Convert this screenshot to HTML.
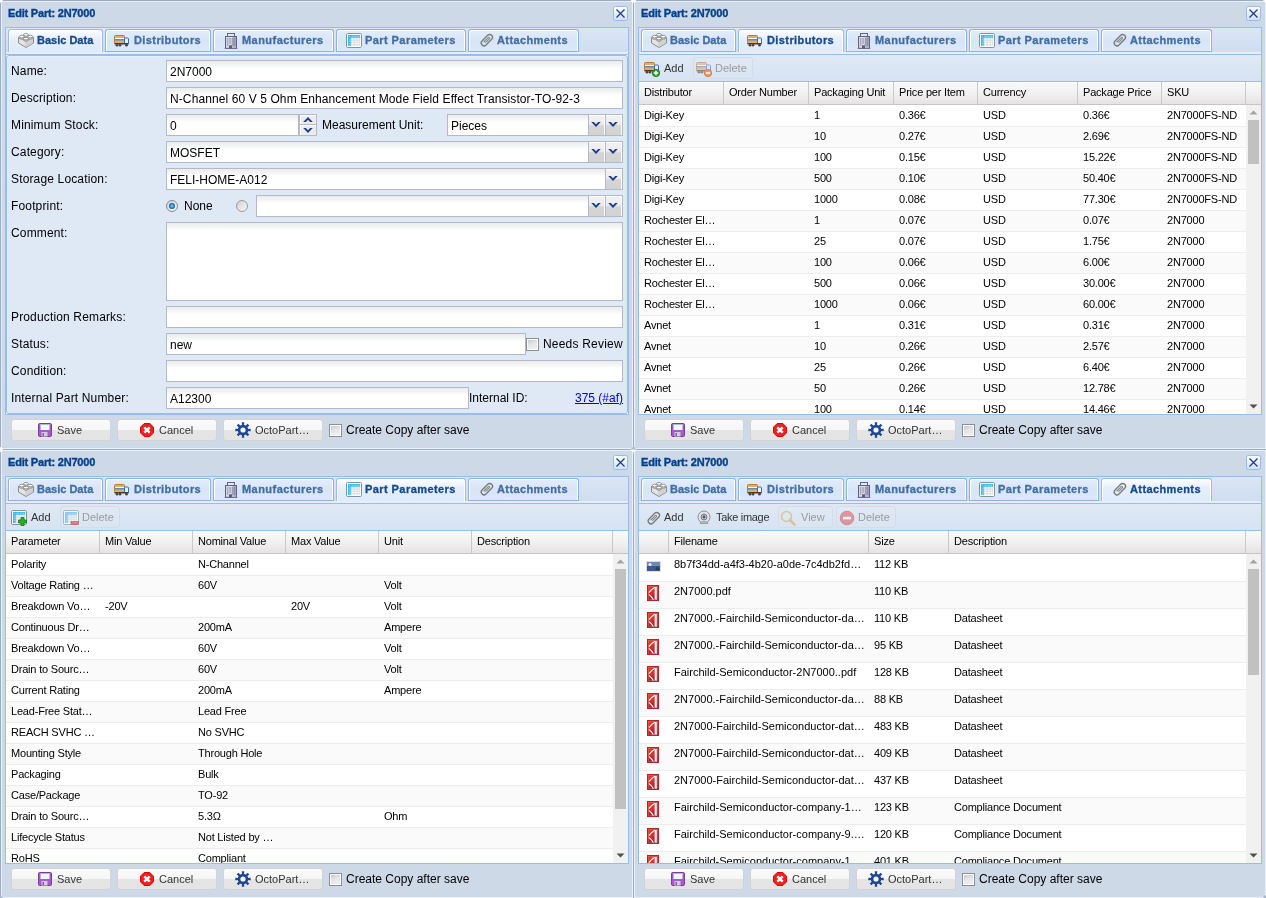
<!DOCTYPE html><html><head><meta charset="utf-8"><style>
*{box-sizing:border-box}
body{margin:0;width:1266px;height:898px;overflow:hidden;position:relative;font-family:"Liberation Sans",sans-serif;background:#fff}
.a{position:absolute}
.t{position:absolute;white-space:nowrap;line-height:20px;height:20px;will-change:transform}
.win{position:absolute;width:633px;height:449px;background:#ced9e7;overflow:hidden}
.fld{position:absolute;background:linear-gradient(#ebeded,#f1f2f2 3px,#fafbfb 6px,#fff 8px);border:1px solid #b5b8c8}
.trg{position:absolute;width:18px;height:22px;background:linear-gradient(#f1f1f1,#ededed 45%,#d5d5d5 55%,#d3d3d3);border:1px solid #b5b8c8;box-shadow:inset 0 1px 0 #fff,inset -1px 0 0 #fafafa}
.tab{position:absolute;top:29px;height:23px;border:1px solid #8db2e3;border-bottom:none;border-radius:3px 3px 0 0;background:linear-gradient(#e3edfa,#d7e5f7 50%,#dde9f9);box-shadow:inset 1px 1px 0 #fbfdff,inset -1px 0 0 #fbfdff}
.tab.on{height:23px;border-radius:3px 3px 0 0;background:linear-gradient(#fdfeff,#e6effb 40%,#deebfb);box-shadow:inset 1px 1px 0 #fff,inset -1px 0 0 #fff;border-color:#99bce8}
.btn{position:absolute;top:419px;height:22px;border:1px solid #d3d3d3;border-radius:3px;background:linear-gradient(#fbfbfb,#f6f6f6 48%,#e5e5e5 50%,#e4e4e4)}
.chk{position:absolute;width:13px;height:13px;border:1px solid #8e8e8e;background:linear-gradient(160deg,#bfc5cf,#e2e4e8 45%,#f4f4f4);box-shadow:inset 0 0 0 1px #fff}
.hdr{position:absolute;top:82px;height:23px;background:linear-gradient(#fbfaf9,#f2f1f1 50%,#e5e3e3);border-bottom:1px solid #c5c5c5}
.sep{position:absolute;top:82px;width:1px;height:22px;background:#c9c9c9}
.tb{position:absolute;left:6px;top:55px;width:622px;height:27px;background:linear-gradient(#e0e9f5,#d6e3f2);border-bottom:1px solid #99bce8}
.dbx{position:absolute;top:57px;height:22px;border:1px solid #d3dde9;border-radius:3px;background:rgba(255,255,255,0.06)}
</style></head><body>
<svg width="0" height="0" style="position:absolute"><defs><linearGradient id="pdfg" x1="0" y1="0" x2="0.3" y2="1"><stop offset="0" stop-color="#e6402c"/><stop offset="0.6" stop-color="#d42e2e"/><stop offset="1" stop-color="#9c1834"/></linearGradient></defs></svg>
<div class="win" style="left:0px;top:0px">
<div class="a" style="left:0px;top:0px;width:633px;height:1px;background:#9aabc3"></div>
<div class="a" style="left:0px;top:0px;width:1px;height:449px;background:#9aabc3"></div>
<div class="a" style="left:1px;top:1px;width:632px;height:1px;background:#e9f0fa"></div>
<div class="a" style="left:1px;top:1px;width:1px;height:448px;background:#e9f0fa"></div>
<div class="a" style="left:632px;top:1px;width:1px;height:448px;background:#e9f0fa"></div>
<div class="a" style="left:1px;top:448px;width:632px;height:1px;background:#e9f0fa"></div>
<div class="t" style="left:8px;top:3px;font-size:11px;font-weight:bold;color:#04408c;letter-spacing:-0.2px;-webkit-text-stroke:0.35px #04408c">Edit Part: 2N7000</div>
<svg class="a" style="left:613px;top:6px;" width="15" height="15" viewBox="0 0 15 15"><defs><linearGradient id="gclose" x1="0" y1="0" x2="0" y2="1"><stop offset="0" stop-color="#fff"/><stop offset="1" stop-color="#cfe0f6"/></linearGradient></defs><rect x="0.5" y="0.5" width="14" height="14" rx="1.8" fill="url(#gclose)" stroke="#99bbe8"/>
<path d="M3.5 3.5 L11.5 11.5 M11.5 3.5 L3.5 11.5" stroke="#233c8c" stroke-width="1.3"/></svg>
<div class="a" style="left:5px;top:27px;width:624px;height:28px;background:linear-gradient(#dbe6f4,#cddcef);border:1px solid #99bce8;border-bottom:none"></div>
<div class="a" style="left:6px;top:52px;width:622px;height:2px;background:#e5eefa"></div>
<div class="a" style="left:5px;top:54px;width:624px;height:1px;background:#99bce8"></div>
<div class="tab on" style="left:8px;width:95px"></div>
<svg class="a" style="left:18px;top:32px;" width="16" height="16" viewBox="0 0 16 16"><path d="M0.5 5.5 L8 2 L15.5 5.5 V11 L8 15.5 L0.5 11 Z" fill="#e4e4e4" stroke="#8c8c8c"/>
<path d="M1 5.8 L8 9.3 L15 5.8" fill="none" stroke="#b4b4b4"/><path d="M8 9.3 V15" stroke="#c4c4c4"/><path d="M8.5 9.5 L15 6 V10.8 L8.5 14.8Z" fill="#d2d2d2"/>
<g stroke="#8c8c8c" stroke-width="0.9"><path d="M5.6 2.8 v1.3 a2.4 1.3 0 0 0 4.8 0 v-1.3" fill="#d8d8d8"/><ellipse cx="8" cy="2.8" rx="2.4" ry="1.3" fill="#fff"/>
<path d="M1.3 4.6 v1.3 a2.4 1.3 0 0 0 4.8 0 v-1.3" fill="#d8d8d8"/><ellipse cx="3.7" cy="4.6" rx="2.4" ry="1.3" fill="#fff"/>
<path d="M9.9 4.6 v1.3 a2.4 1.3 0 0 0 4.8 0 v-1.3" fill="#d8d8d8"/><ellipse cx="12.3" cy="4.6" rx="2.4" ry="1.3" fill="#fff"/>
<path d="M5.6 6.6 v1.3 a2.4 1.3 0 0 0 4.8 0 v-1.3" fill="#d8d8d8"/><ellipse cx="8" cy="6.6" rx="2.4" ry="1.3" fill="#fff"/></g></svg>
<div class="t" style="left:37px;top:30px;font-size:11px;font-weight:bold;color:#15498b;letter-spacing:0px;-webkit-text-stroke:0.3px #15498b">Basic Data</div>
<div class="tab" style="left:105px;width:106px"></div>
<div class="a" style="left:105px;top:51px;width:106px;height:1px;background:#8db2e3"></div>
<svg class="a" style="left:114px;top:34px;" width="15" height="13" viewBox="0 0 15 13"><g opacity="1.0"><rect x="0.5" y="1.5" width="10" height="8" rx="1" fill="#e2ad6c" stroke="#b87a3a"/>
<rect x="1" y="4" width="9" height="1.2" fill="#fff"/><rect x="1" y="5.2" width="9" height="1.2" fill="#3d7fd0"/>
<rect x="10.5" y="4" width="4" height="6" rx="1" fill="#e8f0fb" stroke="#2f6fc4"/>
<rect x="0.5" y="9" width="14" height="1.5" fill="#4a3a2a"/>
<circle cx="3" cy="11.2" r="1.3" fill="#444"/><circle cx="6" cy="11.2" r="1.3" fill="#444"/><circle cx="12.5" cy="11.2" r="1.3" fill="#444"/></g></svg>
<div class="t" style="left:134px;top:30px;font-size:11px;font-weight:bold;color:#416da3;letter-spacing:0.4px;-webkit-text-stroke:0.3px #416da3">Distributors</div>
<div class="tab" style="left:213px;width:121px"></div>
<div class="a" style="left:213px;top:51px;width:121px;height:1px;background:#8db2e3"></div>
<svg class="a" style="left:223px;top:33px;" width="16" height="16" viewBox="0 0 16 16"><ellipse cx="8" cy="15.3" rx="7" ry="0.9" fill="#3c4058" opacity="0.45"/>
<rect x="4.5" y="0.5" width="7" height="3.2" fill="#e8e6f2" stroke="#5d6380"/>
<rect x="2.5" y="3.5" width="11" height="11.8" fill="#dddcea" stroke="#5d6380"/>
<rect x="9.5" y="4" width="3.5" height="10.8" fill="#aeafc4"/>
<path d="M3.8 6h1.6M6.3 6h1.6M8.7 6h1.3M10.6 6h1.8M3.8 8h1.6M6.3 8h1.6M8.7 8h1.3M10.6 8h1.8M3.8 10h1.6M6.3 10h1.6M8.7 10h1.3M10.6 10h1.8M3.8 12h1.6M8.7 12h1.3M10.6 12h1.8" stroke="#6a6d8c" stroke-width="0.9"/>
<rect x="6" y="12.3" width="3" height="3" fill="#5b5f7a"/></svg>
<div class="t" style="left:242px;top:30px;font-size:11px;font-weight:bold;color:#416da3;letter-spacing:0.45px;-webkit-text-stroke:0.3px #416da3">Manufacturers</div>
<div class="tab" style="left:336px;width:130px"></div>
<div class="a" style="left:336px;top:51px;width:130px;height:1px;background:#8db2e3"></div>
<svg class="a" style="left:346px;top:33px;" width="16" height="15" viewBox="0 0 16 15"><g opacity="1.0"><rect x="0.5" y="0.5" width="15" height="14" rx="1.2" fill="#fff" stroke="#7f959c"/>
<rect x="2" y="2" width="12" height="11" rx="0.8" fill="#d3dcde"/>
<rect x="2" y="2" width="12" height="2.6" fill="#2cbcf2"/><rect x="2" y="2" width="2.6" height="11" fill="#2cbcf2"/>
<path d="M3.3 3.3h0.1M3.3 6h0.1M3.3 8.2h0.1M3.3 10.4h0.1M3.3 12.3h0.1" stroke="#8fe0ff" stroke-width="1.2" stroke-linecap="round"/>
<path d="M5.6 3.3h2M8.6 3.3h2M11.4 3.3h2" stroke="#8fe0ff" stroke-width="1"/>
<path d="M5.6 6h2M8.6 6h2M11.4 6h2M5.6 8.2h2M8.6 8.2h2M11.4 8.2h2M5.6 10.4h2M8.6 10.4h2M11.4 10.4h2M5.6 12.3h2M8.6 12.3h2M11.4 12.3h2" stroke="#fff" stroke-width="1.1"/></g></svg>
<div class="t" style="left:365px;top:30px;font-size:11px;font-weight:bold;color:#416da3;letter-spacing:0.43px;-webkit-text-stroke:0.3px #416da3">Part Parameters</div>
<div class="tab" style="left:468px;width:111px"></div>
<div class="a" style="left:468px;top:51px;width:111px;height:1px;background:#8db2e3"></div>
<svg class="a" style="left:479px;top:32px;" width="16" height="16" viewBox="0 0 16 16"><g transform="rotate(45 8 8)"><path d="M5.2 10.5 V4.2 A2.8 2.8 0 0 1 10.8 4.2 V12.2 A2.8 2.8 0 0 1 5.2 12.2 Z" fill="none" stroke="#7a7a7a" stroke-width="1.3"/><path d="M7.2 12 V5.5 A0.8 0.8 0 0 1 8.8 5.5 V11" fill="none" stroke="#8a8a8a" stroke-width="1.1"/></g></svg>
<div class="t" style="left:497px;top:30px;font-size:11px;font-weight:bold;color:#416da3;letter-spacing:0.39px;-webkit-text-stroke:0.3px #416da3">Attachments</div>
<div class="btn" style="left:11px;width:100px"></div>
<svg class="a" style="left:38px;top:423px;" width="14" height="14" viewBox="0 0 14 14"><rect x="0.5" y="0.5" width="13" height="13" rx="1.2" fill="#a55cc8" stroke="#7a3aa0"/>
<rect x="2.5" y="1" width="9" height="6" fill="#eef8f8"/><rect x="2.5" y="1" width="9" height="1" fill="#a8c0c0"/>
<rect x="3.5" y="9" width="6" height="4.5" fill="#cfcfd6"/><rect x="4.5" y="10" width="1.5" height="3" fill="#9b4fc0"/></svg>
<div class="t" style="left:57px;top:420px;font-size:11px;font-weight:normal;color:#333;">Save</div>
<div class="btn" style="left:117px;width:100px"></div>
<svg class="a" style="left:140px;top:423px;" width="14" height="14" viewBox="0 0 14 14"><path d="M4.2 0.5 H9.8 L13.5 4.2 V9.8 L9.8 13.5 H4.2 L0.5 9.8 V4.2 Z" fill="#ee2020" stroke="#e00000"/>
<path d="M4.3 4.3 L9.7 9.7 M9.7 4.3 L4.3 9.7" stroke="#fff" stroke-width="2.4"/></svg>
<div class="t" style="left:159px;top:420px;font-size:11px;font-weight:normal;color:#333;">Cancel</div>
<div class="btn" style="left:223px;width:100px"></div>
<svg class="a" style="left:235px;top:422px;" width="16" height="16" viewBox="0 0 16 16"><path d="M12.49 7.00 L15.70 6.76 L15.70 9.24 L12.49 9.00 L11.88 10.46 L14.32 12.57 L12.57 14.32 L10.46 11.88 L9.00 12.49 L9.24 15.70 L6.76 15.70 L7.00 12.49 L5.54 11.88 L3.43 14.32 L1.68 12.57 L4.12 10.46 L3.51 9.00 L0.30 9.24 L0.30 6.76 L3.51 7.00 L4.12 5.54 L1.68 3.43 L3.43 1.68 L5.54 4.12 L7.00 3.51 L6.76 0.30 L9.24 0.30 L9.00 3.51 L10.46 4.12 L12.57 1.68 L14.32 3.43 L11.88 5.54 Z" fill="#1d4796"/><circle cx="8" cy="8" r="5.3" fill="#1d4796"/><circle cx="8" cy="8" r="2.6" fill="#f4f4f4"/></svg>
<div class="t" style="left:255px;top:420px;font-size:11px;font-weight:normal;color:#333;">OctoPart…</div>
<div class="chk" style="left:329px;top:424px"></div>
<div class="t" style="left:346px;top:420px;font-size:12px;font-weight:normal;color:#000;">Create Copy after save</div>
<div class="a" style="left:5px;top:55px;width:624px;height:360px;background:#f4f7fb;border:1px solid #99bce8;border-top:none"></div>
<div class="a" style="left:6px;top:55px;width:622px;height:359px;background:#dfe9f5;border:1px solid #99bce8;border-radius:3px;box-shadow:inset 1px 1px 0 #e7eef9"></div>
<div class="t" style="left:11px;top:61px;font-size:12px;font-weight:normal;color:#000;letter-spacing:0.15px">Name:</div>
<div class="t" style="left:11px;top:88px;font-size:12px;font-weight:normal;color:#000;letter-spacing:0.15px">Description:</div>
<div class="t" style="left:11px;top:115px;font-size:12px;font-weight:normal;color:#000;letter-spacing:0.15px">Minimum Stock:</div>
<div class="t" style="left:11px;top:142px;font-size:12px;font-weight:normal;color:#000;letter-spacing:0.15px">Category:</div>
<div class="t" style="left:11px;top:169px;font-size:12px;font-weight:normal;color:#000;letter-spacing:0.15px">Storage Location:</div>
<div class="t" style="left:11px;top:196px;font-size:12px;font-weight:normal;color:#000;letter-spacing:0.15px">Footprint:</div>
<div class="t" style="left:11px;top:223px;font-size:12px;font-weight:normal;color:#000;letter-spacing:0.15px">Comment:</div>
<div class="t" style="left:11px;top:307px;font-size:12px;font-weight:normal;color:#000;letter-spacing:0.15px">Production Remarks:</div>
<div class="t" style="left:11px;top:334px;font-size:12px;font-weight:normal;color:#000;letter-spacing:0.15px">Status:</div>
<div class="t" style="left:11px;top:361px;font-size:12px;font-weight:normal;color:#000;letter-spacing:0.15px">Condition:</div>
<div class="t" style="left:11px;top:388px;font-size:12px;font-weight:normal;color:#000;letter-spacing:0.15px">Internal Part Number:</div>
<div class="fld" style="left:166px;top:60px;width:457px;height:22px"></div>
<div class="t" style="left:170px;top:62px;font-size:12px;font-weight:normal;color:#000;letter-spacing:0px">2N7000</div>
<div class="fld" style="left:166px;top:87px;width:457px;height:22px"></div>
<div class="t" style="left:170px;top:89px;font-size:12px;font-weight:normal;color:#000;letter-spacing:0.1px">N-Channel 60 V 5 Ohm Enhancement Mode Field Effect Transistor-TO-92-3</div>
<div class="fld" style="left:166px;top:114px;width:133px;height:22px"></div>
<div class="t" style="left:170px;top:116px;font-size:12px;font-weight:normal;color:#000;letter-spacing:0px">0</div>
<div class="a" style="left:299px;top:114px;width:18px;height:22px;background:#ececec;border:1px solid #b5b8c8;box-shadow:inset 1px 1px 0 #fff"></div>
<div class="a" style="left:300px;top:124px;width:16px;height:1px;background:#b5b8c8"></div>
<div class="a" style="left:300px;top:125px;width:16px;height:1px;background:#fff"></div>
<svg class="a" style="left:303px;top:117px;" width="10" height="5" viewBox="0 0 10 5"><path d="M0.2 5 H2.9 L5 2.7 L7.1 5 H9.8 L5 0 Z" fill="#1d3d8c"/></svg>
<svg class="a" style="left:303px;top:128px;" width="10" height="5" viewBox="0 0 10 5"><path d="M0.2 0 H2.9 L5 2.3 L7.1 0 H9.8 L5 5 Z" fill="#1d3d8c"/></svg>
<div class="t" style="left:322px;top:115px;font-size:12px;font-weight:normal;color:#000;">Measurement Unit:</div>
<div class="fld" style="left:447px;top:114px;width:142px;height:22px"></div>
<div class="t" style="left:451px;top:116px;font-size:12px;font-weight:normal;color:#000;letter-spacing:0px">Pieces</div>
<div class="trg" style="left:588px;top:114px"></div>
<svg class="a" style="left:591px;top:122px;" width="10" height="6" viewBox="0 0 10 6"><path d="M0.2 0 H2.9 L5 2.3 L7.1 0 H9.8 L5 5 Z" fill="#1d3d8c"/></svg>
<div class="trg" style="left:605px;top:114px"></div>
<svg class="a" style="left:608px;top:122px;" width="10" height="6" viewBox="0 0 10 6"><path d="M0.2 0 H2.9 L5 2.3 L7.1 0 H9.8 L5 5 Z" fill="#1d3d8c"/></svg>
<div class="fld" style="left:166px;top:141px;width:423px;height:22px"></div>
<div class="t" style="left:170px;top:143px;font-size:12px;font-weight:normal;color:#000;letter-spacing:0px">MOSFET</div>
<div class="trg" style="left:588px;top:141px"></div>
<svg class="a" style="left:591px;top:149px;" width="10" height="6" viewBox="0 0 10 6"><path d="M0.2 0 H2.9 L5 2.3 L7.1 0 H9.8 L5 5 Z" fill="#1d3d8c"/></svg>
<div class="trg" style="left:605px;top:141px"></div>
<svg class="a" style="left:608px;top:149px;" width="10" height="6" viewBox="0 0 10 6"><path d="M0.2 0 H2.9 L5 2.3 L7.1 0 H9.8 L5 5 Z" fill="#1d3d8c"/></svg>
<div class="fld" style="left:166px;top:168px;width:440px;height:22px"></div>
<div class="t" style="left:170px;top:170px;font-size:12px;font-weight:normal;color:#000;letter-spacing:0px">FELI-HOME-A012</div>
<div class="trg" style="left:605px;top:168px"></div>
<svg class="a" style="left:608px;top:176px;" width="10" height="6" viewBox="0 0 10 6"><path d="M0.2 0 H2.9 L5 2.3 L7.1 0 H9.8 L5 5 Z" fill="#1d3d8c"/></svg>
<svg class="a" style="left:166px;top:200px;" width="12" height="12" viewBox="0 0 12 12"><defs><radialGradient id="rg1"><stop offset="0" stop-color="#7fd0ff"/><stop offset="1" stop-color="#0a5ca8"/></radialGradient><linearGradient id="rgb" x1="0" y1="0" x2="1" y2="1"><stop offset="0" stop-color="#d0d0d0"/><stop offset="1" stop-color="#fafafa"/></linearGradient></defs><circle cx="6" cy="6" r="5.5" fill="url(#rgb)" stroke="#8a8a8a"/><circle cx="6" cy="6" r="3" fill="url(#rg1)"/></svg>
<div class="t" style="left:184px;top:196px;font-size:12px;font-weight:normal;color:#000;">None</div>
<svg class="a" style="left:236px;top:200px;" width="12" height="12" viewBox="0 0 12 12"><circle cx="6" cy="6" r="5.5" fill="url(#rgb)" stroke="#9a9a9a"/></svg>
<div class="fld" style="left:256px;top:195px;width:333px;height:22px"></div>
<div class="trg" style="left:588px;top:195px"></div>
<svg class="a" style="left:591px;top:203px;" width="10" height="6" viewBox="0 0 10 6"><path d="M0.2 0 H2.9 L5 2.3 L7.1 0 H9.8 L5 5 Z" fill="#1d3d8c"/></svg>
<div class="trg" style="left:605px;top:195px"></div>
<svg class="a" style="left:608px;top:203px;" width="10" height="6" viewBox="0 0 10 6"><path d="M0.2 0 H2.9 L5 2.3 L7.1 0 H9.8 L5 5 Z" fill="#1d3d8c"/></svg>
<div class="fld" style="left:166px;top:222px;width:457px;height:79px"></div>
<div class="fld" style="left:166px;top:306px;width:457px;height:22px"></div>
<div class="fld" style="left:166px;top:333px;width:360px;height:22px"></div>
<div class="t" style="left:170px;top:335px;font-size:12px;font-weight:normal;color:#000;letter-spacing:0px">new</div>
<div class="chk" style="left:526px;top:338px"></div>
<div class="t" style="left:543px;top:334px;font-size:12px;font-weight:normal;color:#000;letter-spacing:0.2px">Needs Review</div>
<div class="fld" style="left:166px;top:360px;width:457px;height:22px"></div>
<div class="fld" style="left:166px;top:387px;width:303px;height:22px"></div>
<div class="t" style="left:170px;top:389px;font-size:12px;font-weight:normal;color:#000;letter-spacing:0px">A12300</div>
<div class="t" style="left:469px;top:388px;font-size:12px;font-weight:normal;color:#000;">Internal ID:</div>
<div class="t" style="right:10px;top:388px;font-size:12px;font-weight:normal;color:#0000ee;text-decoration:underline">375 (#af)</div>
</div>
<div class="win" style="left:633px;top:0px">
<div class="a" style="left:0px;top:0px;width:633px;height:1px;background:#9aabc3"></div>
<div class="a" style="left:0px;top:0px;width:1px;height:449px;background:#9aabc3"></div>
<div class="a" style="left:1px;top:1px;width:632px;height:1px;background:#e9f0fa"></div>
<div class="a" style="left:1px;top:1px;width:1px;height:448px;background:#e9f0fa"></div>
<div class="a" style="left:632px;top:1px;width:1px;height:448px;background:#e9f0fa"></div>
<div class="a" style="left:1px;top:448px;width:632px;height:1px;background:#e9f0fa"></div>
<div class="t" style="left:8px;top:3px;font-size:11px;font-weight:bold;color:#04408c;letter-spacing:-0.2px;-webkit-text-stroke:0.35px #04408c">Edit Part: 2N7000</div>
<svg class="a" style="left:613px;top:6px;" width="15" height="15" viewBox="0 0 15 15"><defs><linearGradient id="gclose" x1="0" y1="0" x2="0" y2="1"><stop offset="0" stop-color="#fff"/><stop offset="1" stop-color="#cfe0f6"/></linearGradient></defs><rect x="0.5" y="0.5" width="14" height="14" rx="1.8" fill="url(#gclose)" stroke="#99bbe8"/>
<path d="M3.5 3.5 L11.5 11.5 M11.5 3.5 L3.5 11.5" stroke="#233c8c" stroke-width="1.3"/></svg>
<div class="a" style="left:5px;top:27px;width:624px;height:28px;background:linear-gradient(#dbe6f4,#cddcef);border:1px solid #99bce8;border-bottom:none"></div>
<div class="a" style="left:6px;top:52px;width:622px;height:2px;background:#e5eefa"></div>
<div class="a" style="left:5px;top:54px;width:624px;height:1px;background:#99bce8"></div>
<div class="tab" style="left:8px;width:95px"></div>
<div class="a" style="left:8px;top:51px;width:95px;height:1px;background:#8db2e3"></div>
<svg class="a" style="left:18px;top:32px;" width="16" height="16" viewBox="0 0 16 16"><path d="M0.5 5.5 L8 2 L15.5 5.5 V11 L8 15.5 L0.5 11 Z" fill="#e4e4e4" stroke="#8c8c8c"/>
<path d="M1 5.8 L8 9.3 L15 5.8" fill="none" stroke="#b4b4b4"/><path d="M8 9.3 V15" stroke="#c4c4c4"/><path d="M8.5 9.5 L15 6 V10.8 L8.5 14.8Z" fill="#d2d2d2"/>
<g stroke="#8c8c8c" stroke-width="0.9"><path d="M5.6 2.8 v1.3 a2.4 1.3 0 0 0 4.8 0 v-1.3" fill="#d8d8d8"/><ellipse cx="8" cy="2.8" rx="2.4" ry="1.3" fill="#fff"/>
<path d="M1.3 4.6 v1.3 a2.4 1.3 0 0 0 4.8 0 v-1.3" fill="#d8d8d8"/><ellipse cx="3.7" cy="4.6" rx="2.4" ry="1.3" fill="#fff"/>
<path d="M9.9 4.6 v1.3 a2.4 1.3 0 0 0 4.8 0 v-1.3" fill="#d8d8d8"/><ellipse cx="12.3" cy="4.6" rx="2.4" ry="1.3" fill="#fff"/>
<path d="M5.6 6.6 v1.3 a2.4 1.3 0 0 0 4.8 0 v-1.3" fill="#d8d8d8"/><ellipse cx="8" cy="6.6" rx="2.4" ry="1.3" fill="#fff"/></g></svg>
<div class="t" style="left:37px;top:30px;font-size:11px;font-weight:bold;color:#416da3;letter-spacing:0px;-webkit-text-stroke:0.3px #416da3">Basic Data</div>
<div class="tab on" style="left:105px;width:106px"></div>
<svg class="a" style="left:114px;top:34px;" width="15" height="13" viewBox="0 0 15 13"><g opacity="1.0"><rect x="0.5" y="1.5" width="10" height="8" rx="1" fill="#e2ad6c" stroke="#b87a3a"/>
<rect x="1" y="4" width="9" height="1.2" fill="#fff"/><rect x="1" y="5.2" width="9" height="1.2" fill="#3d7fd0"/>
<rect x="10.5" y="4" width="4" height="6" rx="1" fill="#e8f0fb" stroke="#2f6fc4"/>
<rect x="0.5" y="9" width="14" height="1.5" fill="#4a3a2a"/>
<circle cx="3" cy="11.2" r="1.3" fill="#444"/><circle cx="6" cy="11.2" r="1.3" fill="#444"/><circle cx="12.5" cy="11.2" r="1.3" fill="#444"/></g></svg>
<div class="t" style="left:134px;top:30px;font-size:11px;font-weight:bold;color:#15498b;letter-spacing:0.4px;-webkit-text-stroke:0.3px #15498b">Distributors</div>
<div class="tab" style="left:213px;width:121px"></div>
<div class="a" style="left:213px;top:51px;width:121px;height:1px;background:#8db2e3"></div>
<svg class="a" style="left:223px;top:33px;" width="16" height="16" viewBox="0 0 16 16"><ellipse cx="8" cy="15.3" rx="7" ry="0.9" fill="#3c4058" opacity="0.45"/>
<rect x="4.5" y="0.5" width="7" height="3.2" fill="#e8e6f2" stroke="#5d6380"/>
<rect x="2.5" y="3.5" width="11" height="11.8" fill="#dddcea" stroke="#5d6380"/>
<rect x="9.5" y="4" width="3.5" height="10.8" fill="#aeafc4"/>
<path d="M3.8 6h1.6M6.3 6h1.6M8.7 6h1.3M10.6 6h1.8M3.8 8h1.6M6.3 8h1.6M8.7 8h1.3M10.6 8h1.8M3.8 10h1.6M6.3 10h1.6M8.7 10h1.3M10.6 10h1.8M3.8 12h1.6M8.7 12h1.3M10.6 12h1.8" stroke="#6a6d8c" stroke-width="0.9"/>
<rect x="6" y="12.3" width="3" height="3" fill="#5b5f7a"/></svg>
<div class="t" style="left:242px;top:30px;font-size:11px;font-weight:bold;color:#416da3;letter-spacing:0.45px;-webkit-text-stroke:0.3px #416da3">Manufacturers</div>
<div class="tab" style="left:336px;width:130px"></div>
<div class="a" style="left:336px;top:51px;width:130px;height:1px;background:#8db2e3"></div>
<svg class="a" style="left:346px;top:33px;" width="16" height="15" viewBox="0 0 16 15"><g opacity="1.0"><rect x="0.5" y="0.5" width="15" height="14" rx="1.2" fill="#fff" stroke="#7f959c"/>
<rect x="2" y="2" width="12" height="11" rx="0.8" fill="#d3dcde"/>
<rect x="2" y="2" width="12" height="2.6" fill="#2cbcf2"/><rect x="2" y="2" width="2.6" height="11" fill="#2cbcf2"/>
<path d="M3.3 3.3h0.1M3.3 6h0.1M3.3 8.2h0.1M3.3 10.4h0.1M3.3 12.3h0.1" stroke="#8fe0ff" stroke-width="1.2" stroke-linecap="round"/>
<path d="M5.6 3.3h2M8.6 3.3h2M11.4 3.3h2" stroke="#8fe0ff" stroke-width="1"/>
<path d="M5.6 6h2M8.6 6h2M11.4 6h2M5.6 8.2h2M8.6 8.2h2M11.4 8.2h2M5.6 10.4h2M8.6 10.4h2M11.4 10.4h2M5.6 12.3h2M8.6 12.3h2M11.4 12.3h2" stroke="#fff" stroke-width="1.1"/></g></svg>
<div class="t" style="left:365px;top:30px;font-size:11px;font-weight:bold;color:#416da3;letter-spacing:0.43px;-webkit-text-stroke:0.3px #416da3">Part Parameters</div>
<div class="tab" style="left:468px;width:111px"></div>
<div class="a" style="left:468px;top:51px;width:111px;height:1px;background:#8db2e3"></div>
<svg class="a" style="left:479px;top:32px;" width="16" height="16" viewBox="0 0 16 16"><g transform="rotate(45 8 8)"><path d="M5.2 10.5 V4.2 A2.8 2.8 0 0 1 10.8 4.2 V12.2 A2.8 2.8 0 0 1 5.2 12.2 Z" fill="none" stroke="#7a7a7a" stroke-width="1.3"/><path d="M7.2 12 V5.5 A0.8 0.8 0 0 1 8.8 5.5 V11" fill="none" stroke="#8a8a8a" stroke-width="1.1"/></g></svg>
<div class="t" style="left:497px;top:30px;font-size:11px;font-weight:bold;color:#416da3;letter-spacing:0.39px;-webkit-text-stroke:0.3px #416da3">Attachments</div>
<div class="btn" style="left:11px;width:100px"></div>
<svg class="a" style="left:38px;top:423px;" width="14" height="14" viewBox="0 0 14 14"><rect x="0.5" y="0.5" width="13" height="13" rx="1.2" fill="#a55cc8" stroke="#7a3aa0"/>
<rect x="2.5" y="1" width="9" height="6" fill="#eef8f8"/><rect x="2.5" y="1" width="9" height="1" fill="#a8c0c0"/>
<rect x="3.5" y="9" width="6" height="4.5" fill="#cfcfd6"/><rect x="4.5" y="10" width="1.5" height="3" fill="#9b4fc0"/></svg>
<div class="t" style="left:57px;top:420px;font-size:11px;font-weight:normal;color:#333;">Save</div>
<div class="btn" style="left:117px;width:100px"></div>
<svg class="a" style="left:140px;top:423px;" width="14" height="14" viewBox="0 0 14 14"><path d="M4.2 0.5 H9.8 L13.5 4.2 V9.8 L9.8 13.5 H4.2 L0.5 9.8 V4.2 Z" fill="#ee2020" stroke="#e00000"/>
<path d="M4.3 4.3 L9.7 9.7 M9.7 4.3 L4.3 9.7" stroke="#fff" stroke-width="2.4"/></svg>
<div class="t" style="left:159px;top:420px;font-size:11px;font-weight:normal;color:#333;">Cancel</div>
<div class="btn" style="left:223px;width:100px"></div>
<svg class="a" style="left:235px;top:422px;" width="16" height="16" viewBox="0 0 16 16"><path d="M12.49 7.00 L15.70 6.76 L15.70 9.24 L12.49 9.00 L11.88 10.46 L14.32 12.57 L12.57 14.32 L10.46 11.88 L9.00 12.49 L9.24 15.70 L6.76 15.70 L7.00 12.49 L5.54 11.88 L3.43 14.32 L1.68 12.57 L4.12 10.46 L3.51 9.00 L0.30 9.24 L0.30 6.76 L3.51 7.00 L4.12 5.54 L1.68 3.43 L3.43 1.68 L5.54 4.12 L7.00 3.51 L6.76 0.30 L9.24 0.30 L9.00 3.51 L10.46 4.12 L12.57 1.68 L14.32 3.43 L11.88 5.54 Z" fill="#1d4796"/><circle cx="8" cy="8" r="5.3" fill="#1d4796"/><circle cx="8" cy="8" r="2.6" fill="#f4f4f4"/></svg>
<div class="t" style="left:255px;top:420px;font-size:11px;font-weight:normal;color:#333;">OctoPart…</div>
<div class="chk" style="left:329px;top:424px"></div>
<div class="t" style="left:346px;top:420px;font-size:12px;font-weight:normal;color:#000;">Create Copy after save</div>
<div class="a" style="left:5px;top:55px;width:624px;height:360px;background:#fff;border:1px solid #99bce8;border-top:none"></div>
<div class="tb"></div>
<svg class="a" style="left:11px;top:61px;" width="17" height="17" viewBox="0 0 17 17"><g opacity="1.0"><rect x="0.5" y="1.5" width="10" height="8" rx="1" fill="#e2ad6c" stroke="#b87a3a"/>
<rect x="1" y="4" width="9" height="1.2" fill="#fff"/><rect x="1" y="5.2" width="9" height="1.2" fill="#3d7fd0"/>
<rect x="10.5" y="4" width="4" height="6" rx="1" fill="#e8f0fb" stroke="#2f6fc4"/>
<rect x="0.5" y="9" width="14" height="1.5" fill="#4a3a2a"/>
<circle cx="3" cy="11.2" r="1.3" fill="#444"/><circle cx="6" cy="11.2" r="1.3" fill="#444"/><circle cx="12.5" cy="11.2" r="1.3" fill="#444"/></g><circle cx="12" cy="12" r="3.7" fill="#2ea12e" stroke="#1b7a1b" stroke-width="0.8"/><path d="M12 9.8v4.4M9.8 12h4.4" stroke="#fff" stroke-width="1.5"/></svg>
<div class="t" style="left:31px;top:58px;font-size:11px;font-weight:normal;color:#333;">Add</div>
<div class="dbx" style="left:60px;width:60px"></div>
<svg class="a" style="left:63px;top:61px;" width="17" height="17" viewBox="0 0 17 17"><g opacity="0.55"><rect x="0.5" y="1.5" width="10" height="8" rx="1" fill="#e2ad6c" stroke="#b87a3a"/>
<rect x="1" y="4" width="9" height="1.2" fill="#fff"/><rect x="1" y="5.2" width="9" height="1.2" fill="#3d7fd0"/>
<rect x="10.5" y="4" width="4" height="6" rx="1" fill="#e8f0fb" stroke="#2f6fc4"/>
<rect x="0.5" y="9" width="14" height="1.5" fill="#4a3a2a"/>
<circle cx="3" cy="11.2" r="1.3" fill="#444"/><circle cx="6" cy="11.2" r="1.3" fill="#444"/><circle cx="12.5" cy="11.2" r="1.3" fill="#444"/></g><circle cx="12" cy="12" r="3.7" fill="#e89a6a" stroke="#d07a4a" stroke-width="0.8"/><path d="M9.8 12h4.4" stroke="#fff" stroke-width="1.5"/></svg>
<div class="t" style="left:82px;top:58px;font-size:11px;font-weight:normal;color:#9a9a9a;">Delete</div>
<div class="hdr" style="left:6px;width:622px"></div>
<div class="sep" style="left:90px"></div>
<div class="sep" style="left:175px"></div>
<div class="sep" style="left:260px"></div>
<div class="sep" style="left:344px"></div>
<div class="sep" style="left:444px"></div>
<div class="sep" style="left:528px"></div>
<div class="sep" style="left:612px"></div>
<div class="t" style="left:11px;top:82px;font-size:11px;color:#000;letter-spacing:-0.2px">Distributor</div>
<div class="t" style="left:96px;top:82px;font-size:11px;color:#000;letter-spacing:-0.2px">Order Number</div>
<div class="t" style="left:181px;top:82px;font-size:11px;color:#000;letter-spacing:-0.2px">Packaging Unit</div>
<div class="t" style="left:266px;top:82px;font-size:11px;color:#000;letter-spacing:-0.2px">Price per Item</div>
<div class="t" style="left:350px;top:82px;font-size:11px;color:#000;letter-spacing:-0.2px">Currency</div>
<div class="t" style="left:450px;top:82px;font-size:11px;color:#000;letter-spacing:-0.2px">Package Price</div>
<div class="t" style="left:534px;top:82px;font-size:11px;color:#000;letter-spacing:-0.2px">SKU</div>
<div class="a" style="left:6px;top:105px;width:607px;height:21px;background:#fff"></div>
<div class="a" style="left:6px;top:126px;width:607px;height:21px;background:#fafafa"></div>
<div class="a" style="left:6px;top:147px;width:607px;height:21px;background:#fff"></div>
<div class="a" style="left:6px;top:168px;width:607px;height:21px;background:#fafafa"></div>
<div class="a" style="left:6px;top:189px;width:607px;height:21px;background:#fff"></div>
<div class="a" style="left:6px;top:210px;width:607px;height:21px;background:#fafafa"></div>
<div class="a" style="left:6px;top:231px;width:607px;height:21px;background:#fff"></div>
<div class="a" style="left:6px;top:252px;width:607px;height:21px;background:#fafafa"></div>
<div class="a" style="left:6px;top:273px;width:607px;height:21px;background:#fff"></div>
<div class="a" style="left:6px;top:294px;width:607px;height:21px;background:#fafafa"></div>
<div class="a" style="left:6px;top:315px;width:607px;height:21px;background:#fff"></div>
<div class="a" style="left:6px;top:336px;width:607px;height:21px;background:#fafafa"></div>
<div class="a" style="left:6px;top:357px;width:607px;height:21px;background:#fff"></div>
<div class="a" style="left:6px;top:378px;width:607px;height:21px;background:#fafafa"></div>
<div class="a" style="left:6px;top:399px;width:607px;height:15px;background:#fff"></div>
<div class="a" style="left:0;top:0;width:633px;height:414px;overflow:hidden">
<div class="a" style="left:6px;top:126px;width:607px;height:1px;background:#ededed"></div>
<div class="t" style="left:11px;top:105px;font-size:11px;color:#000;letter-spacing:-0.2px">Digi-Key</div>
<div class="t" style="left:181px;top:105px;font-size:11px;color:#000;letter-spacing:-0.2px">1</div>
<div class="t" style="left:266px;top:105px;font-size:11px;color:#000;letter-spacing:-0.2px">0.36€</div>
<div class="t" style="left:350px;top:105px;font-size:11px;color:#000;letter-spacing:-0.2px">USD</div>
<div class="t" style="left:450px;top:105px;font-size:11px;color:#000;letter-spacing:-0.2px">0.36€</div>
<div class="t" style="left:534px;top:105px;font-size:11px;color:#000;letter-spacing:-0.2px">2N7000FS-ND</div>
<div class="a" style="left:6px;top:147px;width:607px;height:1px;background:#ededed"></div>
<div class="t" style="left:11px;top:126px;font-size:11px;color:#000;letter-spacing:-0.2px">Digi-Key</div>
<div class="t" style="left:181px;top:126px;font-size:11px;color:#000;letter-spacing:-0.2px">10</div>
<div class="t" style="left:266px;top:126px;font-size:11px;color:#000;letter-spacing:-0.2px">0.27€</div>
<div class="t" style="left:350px;top:126px;font-size:11px;color:#000;letter-spacing:-0.2px">USD</div>
<div class="t" style="left:450px;top:126px;font-size:11px;color:#000;letter-spacing:-0.2px">2.69€</div>
<div class="t" style="left:534px;top:126px;font-size:11px;color:#000;letter-spacing:-0.2px">2N7000FS-ND</div>
<div class="a" style="left:6px;top:168px;width:607px;height:1px;background:#ededed"></div>
<div class="t" style="left:11px;top:147px;font-size:11px;color:#000;letter-spacing:-0.2px">Digi-Key</div>
<div class="t" style="left:181px;top:147px;font-size:11px;color:#000;letter-spacing:-0.2px">100</div>
<div class="t" style="left:266px;top:147px;font-size:11px;color:#000;letter-spacing:-0.2px">0.15€</div>
<div class="t" style="left:350px;top:147px;font-size:11px;color:#000;letter-spacing:-0.2px">USD</div>
<div class="t" style="left:450px;top:147px;font-size:11px;color:#000;letter-spacing:-0.2px">15.22€</div>
<div class="t" style="left:534px;top:147px;font-size:11px;color:#000;letter-spacing:-0.2px">2N7000FS-ND</div>
<div class="a" style="left:6px;top:189px;width:607px;height:1px;background:#ededed"></div>
<div class="t" style="left:11px;top:168px;font-size:11px;color:#000;letter-spacing:-0.2px">Digi-Key</div>
<div class="t" style="left:181px;top:168px;font-size:11px;color:#000;letter-spacing:-0.2px">500</div>
<div class="t" style="left:266px;top:168px;font-size:11px;color:#000;letter-spacing:-0.2px">0.10€</div>
<div class="t" style="left:350px;top:168px;font-size:11px;color:#000;letter-spacing:-0.2px">USD</div>
<div class="t" style="left:450px;top:168px;font-size:11px;color:#000;letter-spacing:-0.2px">50.40€</div>
<div class="t" style="left:534px;top:168px;font-size:11px;color:#000;letter-spacing:-0.2px">2N7000FS-ND</div>
<div class="a" style="left:6px;top:210px;width:607px;height:1px;background:#ededed"></div>
<div class="t" style="left:11px;top:189px;font-size:11px;color:#000;letter-spacing:-0.2px">Digi-Key</div>
<div class="t" style="left:181px;top:189px;font-size:11px;color:#000;letter-spacing:-0.2px">1000</div>
<div class="t" style="left:266px;top:189px;font-size:11px;color:#000;letter-spacing:-0.2px">0.08€</div>
<div class="t" style="left:350px;top:189px;font-size:11px;color:#000;letter-spacing:-0.2px">USD</div>
<div class="t" style="left:450px;top:189px;font-size:11px;color:#000;letter-spacing:-0.2px">77.30€</div>
<div class="t" style="left:534px;top:189px;font-size:11px;color:#000;letter-spacing:-0.2px">2N7000FS-ND</div>
<div class="a" style="left:6px;top:231px;width:607px;height:1px;background:#ededed"></div>
<div class="t" style="left:11px;top:210px;font-size:11px;color:#000;letter-spacing:-0.2px">Rochester El<span style="letter-spacing:0.5px">…</span></div>
<div class="t" style="left:181px;top:210px;font-size:11px;color:#000;letter-spacing:-0.2px">1</div>
<div class="t" style="left:266px;top:210px;font-size:11px;color:#000;letter-spacing:-0.2px">0.07€</div>
<div class="t" style="left:350px;top:210px;font-size:11px;color:#000;letter-spacing:-0.2px">USD</div>
<div class="t" style="left:450px;top:210px;font-size:11px;color:#000;letter-spacing:-0.2px">0.07€</div>
<div class="t" style="left:534px;top:210px;font-size:11px;color:#000;letter-spacing:-0.2px">2N7000</div>
<div class="a" style="left:6px;top:252px;width:607px;height:1px;background:#ededed"></div>
<div class="t" style="left:11px;top:231px;font-size:11px;color:#000;letter-spacing:-0.2px">Rochester El<span style="letter-spacing:0.5px">…</span></div>
<div class="t" style="left:181px;top:231px;font-size:11px;color:#000;letter-spacing:-0.2px">25</div>
<div class="t" style="left:266px;top:231px;font-size:11px;color:#000;letter-spacing:-0.2px">0.07€</div>
<div class="t" style="left:350px;top:231px;font-size:11px;color:#000;letter-spacing:-0.2px">USD</div>
<div class="t" style="left:450px;top:231px;font-size:11px;color:#000;letter-spacing:-0.2px">1.75€</div>
<div class="t" style="left:534px;top:231px;font-size:11px;color:#000;letter-spacing:-0.2px">2N7000</div>
<div class="a" style="left:6px;top:273px;width:607px;height:1px;background:#ededed"></div>
<div class="t" style="left:11px;top:252px;font-size:11px;color:#000;letter-spacing:-0.2px">Rochester El<span style="letter-spacing:0.5px">…</span></div>
<div class="t" style="left:181px;top:252px;font-size:11px;color:#000;letter-spacing:-0.2px">100</div>
<div class="t" style="left:266px;top:252px;font-size:11px;color:#000;letter-spacing:-0.2px">0.06€</div>
<div class="t" style="left:350px;top:252px;font-size:11px;color:#000;letter-spacing:-0.2px">USD</div>
<div class="t" style="left:450px;top:252px;font-size:11px;color:#000;letter-spacing:-0.2px">6.00€</div>
<div class="t" style="left:534px;top:252px;font-size:11px;color:#000;letter-spacing:-0.2px">2N7000</div>
<div class="a" style="left:6px;top:294px;width:607px;height:1px;background:#ededed"></div>
<div class="t" style="left:11px;top:273px;font-size:11px;color:#000;letter-spacing:-0.2px">Rochester El<span style="letter-spacing:0.5px">…</span></div>
<div class="t" style="left:181px;top:273px;font-size:11px;color:#000;letter-spacing:-0.2px">500</div>
<div class="t" style="left:266px;top:273px;font-size:11px;color:#000;letter-spacing:-0.2px">0.06€</div>
<div class="t" style="left:350px;top:273px;font-size:11px;color:#000;letter-spacing:-0.2px">USD</div>
<div class="t" style="left:450px;top:273px;font-size:11px;color:#000;letter-spacing:-0.2px">30.00€</div>
<div class="t" style="left:534px;top:273px;font-size:11px;color:#000;letter-spacing:-0.2px">2N7000</div>
<div class="a" style="left:6px;top:315px;width:607px;height:1px;background:#ededed"></div>
<div class="t" style="left:11px;top:294px;font-size:11px;color:#000;letter-spacing:-0.2px">Rochester El<span style="letter-spacing:0.5px">…</span></div>
<div class="t" style="left:181px;top:294px;font-size:11px;color:#000;letter-spacing:-0.2px">1000</div>
<div class="t" style="left:266px;top:294px;font-size:11px;color:#000;letter-spacing:-0.2px">0.06€</div>
<div class="t" style="left:350px;top:294px;font-size:11px;color:#000;letter-spacing:-0.2px">USD</div>
<div class="t" style="left:450px;top:294px;font-size:11px;color:#000;letter-spacing:-0.2px">60.00€</div>
<div class="t" style="left:534px;top:294px;font-size:11px;color:#000;letter-spacing:-0.2px">2N7000</div>
<div class="a" style="left:6px;top:336px;width:607px;height:1px;background:#ededed"></div>
<div class="t" style="left:11px;top:315px;font-size:11px;color:#000;letter-spacing:-0.2px">Avnet</div>
<div class="t" style="left:181px;top:315px;font-size:11px;color:#000;letter-spacing:-0.2px">1</div>
<div class="t" style="left:266px;top:315px;font-size:11px;color:#000;letter-spacing:-0.2px">0.31€</div>
<div class="t" style="left:350px;top:315px;font-size:11px;color:#000;letter-spacing:-0.2px">USD</div>
<div class="t" style="left:450px;top:315px;font-size:11px;color:#000;letter-spacing:-0.2px">0.31€</div>
<div class="t" style="left:534px;top:315px;font-size:11px;color:#000;letter-spacing:-0.2px">2N7000</div>
<div class="a" style="left:6px;top:357px;width:607px;height:1px;background:#ededed"></div>
<div class="t" style="left:11px;top:336px;font-size:11px;color:#000;letter-spacing:-0.2px">Avnet</div>
<div class="t" style="left:181px;top:336px;font-size:11px;color:#000;letter-spacing:-0.2px">10</div>
<div class="t" style="left:266px;top:336px;font-size:11px;color:#000;letter-spacing:-0.2px">0.26€</div>
<div class="t" style="left:350px;top:336px;font-size:11px;color:#000;letter-spacing:-0.2px">USD</div>
<div class="t" style="left:450px;top:336px;font-size:11px;color:#000;letter-spacing:-0.2px">2.57€</div>
<div class="t" style="left:534px;top:336px;font-size:11px;color:#000;letter-spacing:-0.2px">2N7000</div>
<div class="a" style="left:6px;top:378px;width:607px;height:1px;background:#ededed"></div>
<div class="t" style="left:11px;top:357px;font-size:11px;color:#000;letter-spacing:-0.2px">Avnet</div>
<div class="t" style="left:181px;top:357px;font-size:11px;color:#000;letter-spacing:-0.2px">25</div>
<div class="t" style="left:266px;top:357px;font-size:11px;color:#000;letter-spacing:-0.2px">0.26€</div>
<div class="t" style="left:350px;top:357px;font-size:11px;color:#000;letter-spacing:-0.2px">USD</div>
<div class="t" style="left:450px;top:357px;font-size:11px;color:#000;letter-spacing:-0.2px">6.40€</div>
<div class="t" style="left:534px;top:357px;font-size:11px;color:#000;letter-spacing:-0.2px">2N7000</div>
<div class="a" style="left:6px;top:399px;width:607px;height:1px;background:#ededed"></div>
<div class="t" style="left:11px;top:378px;font-size:11px;color:#000;letter-spacing:-0.2px">Avnet</div>
<div class="t" style="left:181px;top:378px;font-size:11px;color:#000;letter-spacing:-0.2px">50</div>
<div class="t" style="left:266px;top:378px;font-size:11px;color:#000;letter-spacing:-0.2px">0.26€</div>
<div class="t" style="left:350px;top:378px;font-size:11px;color:#000;letter-spacing:-0.2px">USD</div>
<div class="t" style="left:450px;top:378px;font-size:11px;color:#000;letter-spacing:-0.2px">12.78€</div>
<div class="t" style="left:534px;top:378px;font-size:11px;color:#000;letter-spacing:-0.2px">2N7000</div>
<div class="t" style="left:11px;top:399px;font-size:11px;color:#000;letter-spacing:-0.2px">Avnet</div>
<div class="t" style="left:181px;top:399px;font-size:11px;color:#000;letter-spacing:-0.2px">100</div>
<div class="t" style="left:266px;top:399px;font-size:11px;color:#000;letter-spacing:-0.2px">0.14€</div>
<div class="t" style="left:350px;top:399px;font-size:11px;color:#000;letter-spacing:-0.2px">USD</div>
<div class="t" style="left:450px;top:399px;font-size:11px;color:#000;letter-spacing:-0.2px">14.46€</div>
<div class="t" style="left:534px;top:399px;font-size:11px;color:#000;letter-spacing:-0.2px">2N7000</div>
</div>
<div class="a" style="left:613px;top:105px;width:15px;height:309px;background:#f1f1f1"></div>
<svg class="a" style="left:616px;top:110px;" width="9" height="5" viewBox="0 0 9 5"><path d="M0.5 4.5 L4.5 0.5 L8.5 4.5z" fill="#a3a3a3"/></svg>
<svg class="a" style="left:616px;top:404px;" width="9" height="5" viewBox="0 0 9 5"><path d="M0.5 0.5 L4.5 4.5 L8.5 0.5z" fill="#505050"/></svg>
<div class="a" style="left:615px;top:120px;width:11px;height:44px;background:#c1c1c1"></div>
</div>
<div class="win" style="left:0px;top:449px">
<div class="a" style="left:0px;top:0px;width:633px;height:1px;background:#9aabc3"></div>
<div class="a" style="left:0px;top:0px;width:1px;height:449px;background:#9aabc3"></div>
<div class="a" style="left:1px;top:1px;width:632px;height:1px;background:#e9f0fa"></div>
<div class="a" style="left:1px;top:1px;width:1px;height:448px;background:#e9f0fa"></div>
<div class="a" style="left:632px;top:1px;width:1px;height:448px;background:#e9f0fa"></div>
<div class="a" style="left:1px;top:448px;width:632px;height:1px;background:#e9f0fa"></div>
<div class="t" style="left:8px;top:3px;font-size:11px;font-weight:bold;color:#04408c;letter-spacing:-0.2px;-webkit-text-stroke:0.35px #04408c">Edit Part: 2N7000</div>
<svg class="a" style="left:613px;top:6px;" width="15" height="15" viewBox="0 0 15 15"><defs><linearGradient id="gclose" x1="0" y1="0" x2="0" y2="1"><stop offset="0" stop-color="#fff"/><stop offset="1" stop-color="#cfe0f6"/></linearGradient></defs><rect x="0.5" y="0.5" width="14" height="14" rx="1.8" fill="url(#gclose)" stroke="#99bbe8"/>
<path d="M3.5 3.5 L11.5 11.5 M11.5 3.5 L3.5 11.5" stroke="#233c8c" stroke-width="1.3"/></svg>
<div class="a" style="left:5px;top:27px;width:624px;height:28px;background:linear-gradient(#dbe6f4,#cddcef);border:1px solid #99bce8;border-bottom:none"></div>
<div class="a" style="left:6px;top:52px;width:622px;height:2px;background:#e5eefa"></div>
<div class="a" style="left:5px;top:54px;width:624px;height:1px;background:#99bce8"></div>
<div class="tab" style="left:8px;width:95px"></div>
<div class="a" style="left:8px;top:51px;width:95px;height:1px;background:#8db2e3"></div>
<svg class="a" style="left:18px;top:32px;" width="16" height="16" viewBox="0 0 16 16"><path d="M0.5 5.5 L8 2 L15.5 5.5 V11 L8 15.5 L0.5 11 Z" fill="#e4e4e4" stroke="#8c8c8c"/>
<path d="M1 5.8 L8 9.3 L15 5.8" fill="none" stroke="#b4b4b4"/><path d="M8 9.3 V15" stroke="#c4c4c4"/><path d="M8.5 9.5 L15 6 V10.8 L8.5 14.8Z" fill="#d2d2d2"/>
<g stroke="#8c8c8c" stroke-width="0.9"><path d="M5.6 2.8 v1.3 a2.4 1.3 0 0 0 4.8 0 v-1.3" fill="#d8d8d8"/><ellipse cx="8" cy="2.8" rx="2.4" ry="1.3" fill="#fff"/>
<path d="M1.3 4.6 v1.3 a2.4 1.3 0 0 0 4.8 0 v-1.3" fill="#d8d8d8"/><ellipse cx="3.7" cy="4.6" rx="2.4" ry="1.3" fill="#fff"/>
<path d="M9.9 4.6 v1.3 a2.4 1.3 0 0 0 4.8 0 v-1.3" fill="#d8d8d8"/><ellipse cx="12.3" cy="4.6" rx="2.4" ry="1.3" fill="#fff"/>
<path d="M5.6 6.6 v1.3 a2.4 1.3 0 0 0 4.8 0 v-1.3" fill="#d8d8d8"/><ellipse cx="8" cy="6.6" rx="2.4" ry="1.3" fill="#fff"/></g></svg>
<div class="t" style="left:37px;top:30px;font-size:11px;font-weight:bold;color:#416da3;letter-spacing:0px;-webkit-text-stroke:0.3px #416da3">Basic Data</div>
<div class="tab" style="left:105px;width:106px"></div>
<div class="a" style="left:105px;top:51px;width:106px;height:1px;background:#8db2e3"></div>
<svg class="a" style="left:114px;top:34px;" width="15" height="13" viewBox="0 0 15 13"><g opacity="1.0"><rect x="0.5" y="1.5" width="10" height="8" rx="1" fill="#e2ad6c" stroke="#b87a3a"/>
<rect x="1" y="4" width="9" height="1.2" fill="#fff"/><rect x="1" y="5.2" width="9" height="1.2" fill="#3d7fd0"/>
<rect x="10.5" y="4" width="4" height="6" rx="1" fill="#e8f0fb" stroke="#2f6fc4"/>
<rect x="0.5" y="9" width="14" height="1.5" fill="#4a3a2a"/>
<circle cx="3" cy="11.2" r="1.3" fill="#444"/><circle cx="6" cy="11.2" r="1.3" fill="#444"/><circle cx="12.5" cy="11.2" r="1.3" fill="#444"/></g></svg>
<div class="t" style="left:134px;top:30px;font-size:11px;font-weight:bold;color:#416da3;letter-spacing:0.4px;-webkit-text-stroke:0.3px #416da3">Distributors</div>
<div class="tab" style="left:213px;width:121px"></div>
<div class="a" style="left:213px;top:51px;width:121px;height:1px;background:#8db2e3"></div>
<svg class="a" style="left:223px;top:33px;" width="16" height="16" viewBox="0 0 16 16"><ellipse cx="8" cy="15.3" rx="7" ry="0.9" fill="#3c4058" opacity="0.45"/>
<rect x="4.5" y="0.5" width="7" height="3.2" fill="#e8e6f2" stroke="#5d6380"/>
<rect x="2.5" y="3.5" width="11" height="11.8" fill="#dddcea" stroke="#5d6380"/>
<rect x="9.5" y="4" width="3.5" height="10.8" fill="#aeafc4"/>
<path d="M3.8 6h1.6M6.3 6h1.6M8.7 6h1.3M10.6 6h1.8M3.8 8h1.6M6.3 8h1.6M8.7 8h1.3M10.6 8h1.8M3.8 10h1.6M6.3 10h1.6M8.7 10h1.3M10.6 10h1.8M3.8 12h1.6M8.7 12h1.3M10.6 12h1.8" stroke="#6a6d8c" stroke-width="0.9"/>
<rect x="6" y="12.3" width="3" height="3" fill="#5b5f7a"/></svg>
<div class="t" style="left:242px;top:30px;font-size:11px;font-weight:bold;color:#416da3;letter-spacing:0.45px;-webkit-text-stroke:0.3px #416da3">Manufacturers</div>
<div class="tab on" style="left:336px;width:130px"></div>
<svg class="a" style="left:346px;top:33px;" width="16" height="15" viewBox="0 0 16 15"><g opacity="1.0"><rect x="0.5" y="0.5" width="15" height="14" rx="1.2" fill="#fff" stroke="#7f959c"/>
<rect x="2" y="2" width="12" height="11" rx="0.8" fill="#d3dcde"/>
<rect x="2" y="2" width="12" height="2.6" fill="#2cbcf2"/><rect x="2" y="2" width="2.6" height="11" fill="#2cbcf2"/>
<path d="M3.3 3.3h0.1M3.3 6h0.1M3.3 8.2h0.1M3.3 10.4h0.1M3.3 12.3h0.1" stroke="#8fe0ff" stroke-width="1.2" stroke-linecap="round"/>
<path d="M5.6 3.3h2M8.6 3.3h2M11.4 3.3h2" stroke="#8fe0ff" stroke-width="1"/>
<path d="M5.6 6h2M8.6 6h2M11.4 6h2M5.6 8.2h2M8.6 8.2h2M11.4 8.2h2M5.6 10.4h2M8.6 10.4h2M11.4 10.4h2M5.6 12.3h2M8.6 12.3h2M11.4 12.3h2" stroke="#fff" stroke-width="1.1"/></g></svg>
<div class="t" style="left:365px;top:30px;font-size:11px;font-weight:bold;color:#15498b;letter-spacing:0.43px;-webkit-text-stroke:0.3px #15498b">Part Parameters</div>
<div class="tab" style="left:468px;width:111px"></div>
<div class="a" style="left:468px;top:51px;width:111px;height:1px;background:#8db2e3"></div>
<svg class="a" style="left:479px;top:32px;" width="16" height="16" viewBox="0 0 16 16"><g transform="rotate(45 8 8)"><path d="M5.2 10.5 V4.2 A2.8 2.8 0 0 1 10.8 4.2 V12.2 A2.8 2.8 0 0 1 5.2 12.2 Z" fill="none" stroke="#7a7a7a" stroke-width="1.3"/><path d="M7.2 12 V5.5 A0.8 0.8 0 0 1 8.8 5.5 V11" fill="none" stroke="#8a8a8a" stroke-width="1.1"/></g></svg>
<div class="t" style="left:497px;top:30px;font-size:11px;font-weight:bold;color:#416da3;letter-spacing:0.39px;-webkit-text-stroke:0.3px #416da3">Attachments</div>
<div class="btn" style="left:11px;width:100px"></div>
<svg class="a" style="left:38px;top:423px;" width="14" height="14" viewBox="0 0 14 14"><rect x="0.5" y="0.5" width="13" height="13" rx="1.2" fill="#a55cc8" stroke="#7a3aa0"/>
<rect x="2.5" y="1" width="9" height="6" fill="#eef8f8"/><rect x="2.5" y="1" width="9" height="1" fill="#a8c0c0"/>
<rect x="3.5" y="9" width="6" height="4.5" fill="#cfcfd6"/><rect x="4.5" y="10" width="1.5" height="3" fill="#9b4fc0"/></svg>
<div class="t" style="left:57px;top:420px;font-size:11px;font-weight:normal;color:#333;">Save</div>
<div class="btn" style="left:117px;width:100px"></div>
<svg class="a" style="left:140px;top:423px;" width="14" height="14" viewBox="0 0 14 14"><path d="M4.2 0.5 H9.8 L13.5 4.2 V9.8 L9.8 13.5 H4.2 L0.5 9.8 V4.2 Z" fill="#ee2020" stroke="#e00000"/>
<path d="M4.3 4.3 L9.7 9.7 M9.7 4.3 L4.3 9.7" stroke="#fff" stroke-width="2.4"/></svg>
<div class="t" style="left:159px;top:420px;font-size:11px;font-weight:normal;color:#333;">Cancel</div>
<div class="btn" style="left:223px;width:100px"></div>
<svg class="a" style="left:235px;top:422px;" width="16" height="16" viewBox="0 0 16 16"><path d="M12.49 7.00 L15.70 6.76 L15.70 9.24 L12.49 9.00 L11.88 10.46 L14.32 12.57 L12.57 14.32 L10.46 11.88 L9.00 12.49 L9.24 15.70 L6.76 15.70 L7.00 12.49 L5.54 11.88 L3.43 14.32 L1.68 12.57 L4.12 10.46 L3.51 9.00 L0.30 9.24 L0.30 6.76 L3.51 7.00 L4.12 5.54 L1.68 3.43 L3.43 1.68 L5.54 4.12 L7.00 3.51 L6.76 0.30 L9.24 0.30 L9.00 3.51 L10.46 4.12 L12.57 1.68 L14.32 3.43 L11.88 5.54 Z" fill="#1d4796"/><circle cx="8" cy="8" r="5.3" fill="#1d4796"/><circle cx="8" cy="8" r="2.6" fill="#f4f4f4"/></svg>
<div class="t" style="left:255px;top:420px;font-size:11px;font-weight:normal;color:#333;">OctoPart…</div>
<div class="chk" style="left:329px;top:424px"></div>
<div class="t" style="left:346px;top:420px;font-size:12px;font-weight:normal;color:#000;">Create Copy after save</div>
<div class="a" style="left:5px;top:55px;width:624px;height:360px;background:#fff;border:1px solid #99bce8;border-top:none"></div>
<div class="tb"></div>
<svg class="a" style="left:11px;top:61px;" width="17" height="17" viewBox="0 0 17 17"><g opacity="1.0"><rect x="0.5" y="0.5" width="15" height="14" rx="1.2" fill="#fff" stroke="#7f959c"/>
<rect x="2" y="2" width="12" height="11" rx="0.8" fill="#d3dcde"/>
<rect x="2" y="2" width="12" height="2.6" fill="#2cbcf2"/><rect x="2" y="2" width="2.6" height="11" fill="#2cbcf2"/>
<path d="M3.3 3.3h0.1M3.3 6h0.1M3.3 8.2h0.1M3.3 10.4h0.1M3.3 12.3h0.1" stroke="#8fe0ff" stroke-width="1.2" stroke-linecap="round"/>
<path d="M5.6 3.3h2M8.6 3.3h2M11.4 3.3h2" stroke="#8fe0ff" stroke-width="1"/>
<path d="M5.6 6h2M8.6 6h2M11.4 6h2M5.6 8.2h2M8.6 8.2h2M11.4 8.2h2M5.6 10.4h2M8.6 10.4h2M11.4 10.4h2M5.6 12.3h2M8.6 12.3h2M11.4 12.3h2" stroke="#fff" stroke-width="1.1"/></g><path d="M10.5 9h3v2.5h2.5v3h-2.5v2.5h-3v-2.5h-2.5v-3h2.5z" fill="#22b422" stroke="#147a14" stroke-width="0.8" transform="translate(-0.5,-1.5)"/></svg>
<div class="t" style="left:31px;top:58px;font-size:11px;font-weight:normal;color:#333;">Add</div>
<div class="dbx" style="left:60px;width:60px"></div>
<svg class="a" style="left:63px;top:61px;" width="17" height="17" viewBox="0 0 17 17"><g opacity="0.6"><rect x="0.5" y="0.5" width="15" height="14" rx="1.2" fill="#fff" stroke="#7f959c"/>
<rect x="2" y="2" width="12" height="11" rx="0.8" fill="#d3dcde"/>
<rect x="2" y="2" width="12" height="2.6" fill="#2cbcf2"/><rect x="2" y="2" width="2.6" height="11" fill="#2cbcf2"/>
<path d="M3.3 3.3h0.1M3.3 6h0.1M3.3 8.2h0.1M3.3 10.4h0.1M3.3 12.3h0.1" stroke="#8fe0ff" stroke-width="1.2" stroke-linecap="round"/>
<path d="M5.6 3.3h2M8.6 3.3h2M11.4 3.3h2" stroke="#8fe0ff" stroke-width="1"/>
<path d="M5.6 6h2M8.6 6h2M11.4 6h2M5.6 8.2h2M8.6 8.2h2M11.4 8.2h2M5.6 10.4h2M8.6 10.4h2M11.4 10.4h2M5.6 12.3h2M8.6 12.3h2M11.4 12.3h2" stroke="#fff" stroke-width="1.1"/></g><rect x="8" y="11.5" width="7.5" height="3" fill="#e07a86" stroke="#c55" stroke-width="0.6"/></svg>
<div class="t" style="left:82px;top:58px;font-size:11px;font-weight:normal;color:#9a9a9a;">Delete</div>
<div class="hdr" style="left:6px;width:622px"></div>
<div class="sep" style="left:99px"></div>
<div class="sep" style="left:192px"></div>
<div class="sep" style="left:285px"></div>
<div class="sep" style="left:378px"></div>
<div class="sep" style="left:471px"></div>
<div class="sep" style="left:612px"></div>
<div class="t" style="left:11px;top:82px;font-size:11px;color:#000;letter-spacing:-0.2px">Parameter</div>
<div class="t" style="left:105px;top:82px;font-size:11px;color:#000;letter-spacing:-0.2px">Min Value</div>
<div class="t" style="left:198px;top:82px;font-size:11px;color:#000;letter-spacing:-0.2px">Nominal Value</div>
<div class="t" style="left:291px;top:82px;font-size:11px;color:#000;letter-spacing:-0.2px">Max Value</div>
<div class="t" style="left:384px;top:82px;font-size:11px;color:#000;letter-spacing:-0.2px">Unit</div>
<div class="t" style="left:477px;top:82px;font-size:11px;color:#000;letter-spacing:-0.2px">Description</div>
<div class="a" style="left:6px;top:105px;width:607px;height:21px;background:#fff"></div>
<div class="a" style="left:6px;top:126px;width:607px;height:21px;background:#fafafa"></div>
<div class="a" style="left:6px;top:147px;width:607px;height:21px;background:#fff"></div>
<div class="a" style="left:6px;top:168px;width:607px;height:21px;background:#fafafa"></div>
<div class="a" style="left:6px;top:189px;width:607px;height:21px;background:#fff"></div>
<div class="a" style="left:6px;top:210px;width:607px;height:21px;background:#fafafa"></div>
<div class="a" style="left:6px;top:231px;width:607px;height:21px;background:#fff"></div>
<div class="a" style="left:6px;top:252px;width:607px;height:21px;background:#fafafa"></div>
<div class="a" style="left:6px;top:273px;width:607px;height:21px;background:#fff"></div>
<div class="a" style="left:6px;top:294px;width:607px;height:21px;background:#fafafa"></div>
<div class="a" style="left:6px;top:315px;width:607px;height:21px;background:#fff"></div>
<div class="a" style="left:6px;top:336px;width:607px;height:21px;background:#fafafa"></div>
<div class="a" style="left:6px;top:357px;width:607px;height:21px;background:#fff"></div>
<div class="a" style="left:6px;top:378px;width:607px;height:21px;background:#fafafa"></div>
<div class="a" style="left:6px;top:399px;width:607px;height:15px;background:#fff"></div>
<div class="a" style="left:0;top:0;width:633px;height:414px;overflow:hidden">
<div class="a" style="left:6px;top:126px;width:607px;height:1px;background:#ededed"></div>
<div class="t" style="left:11px;top:105px;font-size:11px;color:#000;letter-spacing:-0.2px">Polarity</div>
<div class="t" style="left:198px;top:105px;font-size:11px;color:#000;letter-spacing:-0.2px">N-Channel</div>
<div class="a" style="left:6px;top:147px;width:607px;height:1px;background:#ededed"></div>
<div class="t" style="left:11px;top:126px;font-size:11px;color:#000;letter-spacing:-0.2px">Voltage Rating <span style="letter-spacing:0.5px">…</span></div>
<div class="t" style="left:198px;top:126px;font-size:11px;color:#000;letter-spacing:-0.2px">60V</div>
<div class="t" style="left:384px;top:126px;font-size:11px;color:#000;letter-spacing:-0.2px">Volt</div>
<div class="a" style="left:6px;top:168px;width:607px;height:1px;background:#ededed"></div>
<div class="t" style="left:11px;top:147px;font-size:11px;color:#000;letter-spacing:-0.2px">Breakdown Vo<span style="letter-spacing:0.5px">…</span></div>
<div class="t" style="left:105px;top:147px;font-size:11px;color:#000;letter-spacing:-0.2px">-20V</div>
<div class="t" style="left:291px;top:147px;font-size:11px;color:#000;letter-spacing:-0.2px">20V</div>
<div class="t" style="left:384px;top:147px;font-size:11px;color:#000;letter-spacing:-0.2px">Volt</div>
<div class="a" style="left:6px;top:189px;width:607px;height:1px;background:#ededed"></div>
<div class="t" style="left:11px;top:168px;font-size:11px;color:#000;letter-spacing:-0.2px">Continuous Dr<span style="letter-spacing:0.5px">…</span></div>
<div class="t" style="left:198px;top:168px;font-size:11px;color:#000;letter-spacing:-0.2px">200mA</div>
<div class="t" style="left:384px;top:168px;font-size:11px;color:#000;letter-spacing:-0.2px">Ampere</div>
<div class="a" style="left:6px;top:210px;width:607px;height:1px;background:#ededed"></div>
<div class="t" style="left:11px;top:189px;font-size:11px;color:#000;letter-spacing:-0.2px">Breakdown Vo<span style="letter-spacing:0.5px">…</span></div>
<div class="t" style="left:198px;top:189px;font-size:11px;color:#000;letter-spacing:-0.2px">60V</div>
<div class="t" style="left:384px;top:189px;font-size:11px;color:#000;letter-spacing:-0.2px">Volt</div>
<div class="a" style="left:6px;top:231px;width:607px;height:1px;background:#ededed"></div>
<div class="t" style="left:11px;top:210px;font-size:11px;color:#000;letter-spacing:-0.2px">Drain to Sourc<span style="letter-spacing:0.5px">…</span></div>
<div class="t" style="left:198px;top:210px;font-size:11px;color:#000;letter-spacing:-0.2px">60V</div>
<div class="t" style="left:384px;top:210px;font-size:11px;color:#000;letter-spacing:-0.2px">Volt</div>
<div class="a" style="left:6px;top:252px;width:607px;height:1px;background:#ededed"></div>
<div class="t" style="left:11px;top:231px;font-size:11px;color:#000;letter-spacing:-0.2px">Current Rating</div>
<div class="t" style="left:198px;top:231px;font-size:11px;color:#000;letter-spacing:-0.2px">200mA</div>
<div class="t" style="left:384px;top:231px;font-size:11px;color:#000;letter-spacing:-0.2px">Ampere</div>
<div class="a" style="left:6px;top:273px;width:607px;height:1px;background:#ededed"></div>
<div class="t" style="left:11px;top:252px;font-size:11px;color:#000;letter-spacing:-0.2px">Lead-Free Stat<span style="letter-spacing:0.5px">…</span></div>
<div class="t" style="left:198px;top:252px;font-size:11px;color:#000;letter-spacing:-0.2px">Lead Free</div>
<div class="a" style="left:6px;top:294px;width:607px;height:1px;background:#ededed"></div>
<div class="t" style="left:11px;top:273px;font-size:11px;color:#000;letter-spacing:-0.2px">REACH SVHC <span style="letter-spacing:0.5px">…</span></div>
<div class="t" style="left:198px;top:273px;font-size:11px;color:#000;letter-spacing:-0.2px">No SVHC</div>
<div class="a" style="left:6px;top:315px;width:607px;height:1px;background:#ededed"></div>
<div class="t" style="left:11px;top:294px;font-size:11px;color:#000;letter-spacing:-0.2px">Mounting Style</div>
<div class="t" style="left:198px;top:294px;font-size:11px;color:#000;letter-spacing:-0.2px">Through Hole</div>
<div class="a" style="left:6px;top:336px;width:607px;height:1px;background:#ededed"></div>
<div class="t" style="left:11px;top:315px;font-size:11px;color:#000;letter-spacing:-0.2px">Packaging</div>
<div class="t" style="left:198px;top:315px;font-size:11px;color:#000;letter-spacing:-0.2px">Bulk</div>
<div class="a" style="left:6px;top:357px;width:607px;height:1px;background:#ededed"></div>
<div class="t" style="left:11px;top:336px;font-size:11px;color:#000;letter-spacing:-0.2px">Case/Package</div>
<div class="t" style="left:198px;top:336px;font-size:11px;color:#000;letter-spacing:-0.2px">TO-92</div>
<div class="a" style="left:6px;top:378px;width:607px;height:1px;background:#ededed"></div>
<div class="t" style="left:11px;top:357px;font-size:11px;color:#000;letter-spacing:-0.2px">Drain to Sourc<span style="letter-spacing:0.5px">…</span></div>
<div class="t" style="left:198px;top:357px;font-size:11px;color:#000;letter-spacing:-0.2px">5.3Ω</div>
<div class="t" style="left:384px;top:357px;font-size:11px;color:#000;letter-spacing:-0.2px">Ohm</div>
<div class="a" style="left:6px;top:399px;width:607px;height:1px;background:#ededed"></div>
<div class="t" style="left:11px;top:378px;font-size:11px;color:#000;letter-spacing:-0.2px">Lifecycle Status</div>
<div class="t" style="left:198px;top:378px;font-size:11px;color:#000;letter-spacing:-0.2px">Not Listed by <span style="letter-spacing:0.5px">…</span></div>
<div class="t" style="left:11px;top:399px;font-size:11px;color:#000;letter-spacing:-0.2px">RoHS</div>
<div class="t" style="left:198px;top:399px;font-size:11px;color:#000;letter-spacing:-0.2px">Compliant</div>
</div>
<div class="a" style="left:613px;top:105px;width:15px;height:309px;background:#f1f1f1"></div>
<svg class="a" style="left:616px;top:110px;" width="9" height="5" viewBox="0 0 9 5"><path d="M0.5 4.5 L4.5 0.5 L8.5 4.5z" fill="#a3a3a3"/></svg>
<svg class="a" style="left:616px;top:404px;" width="9" height="5" viewBox="0 0 9 5"><path d="M0.5 0.5 L4.5 4.5 L8.5 0.5z" fill="#505050"/></svg>
<div class="a" style="left:615px;top:120px;width:11px;height:240px;background:#c1c1c1"></div>
</div>
<div class="win" style="left:633px;top:449px">
<div class="a" style="left:0px;top:0px;width:633px;height:1px;background:#9aabc3"></div>
<div class="a" style="left:0px;top:0px;width:1px;height:449px;background:#9aabc3"></div>
<div class="a" style="left:1px;top:1px;width:632px;height:1px;background:#e9f0fa"></div>
<div class="a" style="left:1px;top:1px;width:1px;height:448px;background:#e9f0fa"></div>
<div class="a" style="left:632px;top:1px;width:1px;height:448px;background:#e9f0fa"></div>
<div class="a" style="left:1px;top:448px;width:632px;height:1px;background:#e9f0fa"></div>
<div class="t" style="left:8px;top:3px;font-size:11px;font-weight:bold;color:#04408c;letter-spacing:-0.2px;-webkit-text-stroke:0.35px #04408c">Edit Part: 2N7000</div>
<svg class="a" style="left:613px;top:6px;" width="15" height="15" viewBox="0 0 15 15"><defs><linearGradient id="gclose" x1="0" y1="0" x2="0" y2="1"><stop offset="0" stop-color="#fff"/><stop offset="1" stop-color="#cfe0f6"/></linearGradient></defs><rect x="0.5" y="0.5" width="14" height="14" rx="1.8" fill="url(#gclose)" stroke="#99bbe8"/>
<path d="M3.5 3.5 L11.5 11.5 M11.5 3.5 L3.5 11.5" stroke="#233c8c" stroke-width="1.3"/></svg>
<div class="a" style="left:5px;top:27px;width:624px;height:28px;background:linear-gradient(#dbe6f4,#cddcef);border:1px solid #99bce8;border-bottom:none"></div>
<div class="a" style="left:6px;top:52px;width:622px;height:2px;background:#e5eefa"></div>
<div class="a" style="left:5px;top:54px;width:624px;height:1px;background:#99bce8"></div>
<div class="tab" style="left:8px;width:95px"></div>
<div class="a" style="left:8px;top:51px;width:95px;height:1px;background:#8db2e3"></div>
<svg class="a" style="left:18px;top:32px;" width="16" height="16" viewBox="0 0 16 16"><path d="M0.5 5.5 L8 2 L15.5 5.5 V11 L8 15.5 L0.5 11 Z" fill="#e4e4e4" stroke="#8c8c8c"/>
<path d="M1 5.8 L8 9.3 L15 5.8" fill="none" stroke="#b4b4b4"/><path d="M8 9.3 V15" stroke="#c4c4c4"/><path d="M8.5 9.5 L15 6 V10.8 L8.5 14.8Z" fill="#d2d2d2"/>
<g stroke="#8c8c8c" stroke-width="0.9"><path d="M5.6 2.8 v1.3 a2.4 1.3 0 0 0 4.8 0 v-1.3" fill="#d8d8d8"/><ellipse cx="8" cy="2.8" rx="2.4" ry="1.3" fill="#fff"/>
<path d="M1.3 4.6 v1.3 a2.4 1.3 0 0 0 4.8 0 v-1.3" fill="#d8d8d8"/><ellipse cx="3.7" cy="4.6" rx="2.4" ry="1.3" fill="#fff"/>
<path d="M9.9 4.6 v1.3 a2.4 1.3 0 0 0 4.8 0 v-1.3" fill="#d8d8d8"/><ellipse cx="12.3" cy="4.6" rx="2.4" ry="1.3" fill="#fff"/>
<path d="M5.6 6.6 v1.3 a2.4 1.3 0 0 0 4.8 0 v-1.3" fill="#d8d8d8"/><ellipse cx="8" cy="6.6" rx="2.4" ry="1.3" fill="#fff"/></g></svg>
<div class="t" style="left:37px;top:30px;font-size:11px;font-weight:bold;color:#416da3;letter-spacing:0px;-webkit-text-stroke:0.3px #416da3">Basic Data</div>
<div class="tab" style="left:105px;width:106px"></div>
<div class="a" style="left:105px;top:51px;width:106px;height:1px;background:#8db2e3"></div>
<svg class="a" style="left:114px;top:34px;" width="15" height="13" viewBox="0 0 15 13"><g opacity="1.0"><rect x="0.5" y="1.5" width="10" height="8" rx="1" fill="#e2ad6c" stroke="#b87a3a"/>
<rect x="1" y="4" width="9" height="1.2" fill="#fff"/><rect x="1" y="5.2" width="9" height="1.2" fill="#3d7fd0"/>
<rect x="10.5" y="4" width="4" height="6" rx="1" fill="#e8f0fb" stroke="#2f6fc4"/>
<rect x="0.5" y="9" width="14" height="1.5" fill="#4a3a2a"/>
<circle cx="3" cy="11.2" r="1.3" fill="#444"/><circle cx="6" cy="11.2" r="1.3" fill="#444"/><circle cx="12.5" cy="11.2" r="1.3" fill="#444"/></g></svg>
<div class="t" style="left:134px;top:30px;font-size:11px;font-weight:bold;color:#416da3;letter-spacing:0.4px;-webkit-text-stroke:0.3px #416da3">Distributors</div>
<div class="tab" style="left:213px;width:121px"></div>
<div class="a" style="left:213px;top:51px;width:121px;height:1px;background:#8db2e3"></div>
<svg class="a" style="left:223px;top:33px;" width="16" height="16" viewBox="0 0 16 16"><ellipse cx="8" cy="15.3" rx="7" ry="0.9" fill="#3c4058" opacity="0.45"/>
<rect x="4.5" y="0.5" width="7" height="3.2" fill="#e8e6f2" stroke="#5d6380"/>
<rect x="2.5" y="3.5" width="11" height="11.8" fill="#dddcea" stroke="#5d6380"/>
<rect x="9.5" y="4" width="3.5" height="10.8" fill="#aeafc4"/>
<path d="M3.8 6h1.6M6.3 6h1.6M8.7 6h1.3M10.6 6h1.8M3.8 8h1.6M6.3 8h1.6M8.7 8h1.3M10.6 8h1.8M3.8 10h1.6M6.3 10h1.6M8.7 10h1.3M10.6 10h1.8M3.8 12h1.6M8.7 12h1.3M10.6 12h1.8" stroke="#6a6d8c" stroke-width="0.9"/>
<rect x="6" y="12.3" width="3" height="3" fill="#5b5f7a"/></svg>
<div class="t" style="left:242px;top:30px;font-size:11px;font-weight:bold;color:#416da3;letter-spacing:0.45px;-webkit-text-stroke:0.3px #416da3">Manufacturers</div>
<div class="tab" style="left:336px;width:130px"></div>
<div class="a" style="left:336px;top:51px;width:130px;height:1px;background:#8db2e3"></div>
<svg class="a" style="left:346px;top:33px;" width="16" height="15" viewBox="0 0 16 15"><g opacity="1.0"><rect x="0.5" y="0.5" width="15" height="14" rx="1.2" fill="#fff" stroke="#7f959c"/>
<rect x="2" y="2" width="12" height="11" rx="0.8" fill="#d3dcde"/>
<rect x="2" y="2" width="12" height="2.6" fill="#2cbcf2"/><rect x="2" y="2" width="2.6" height="11" fill="#2cbcf2"/>
<path d="M3.3 3.3h0.1M3.3 6h0.1M3.3 8.2h0.1M3.3 10.4h0.1M3.3 12.3h0.1" stroke="#8fe0ff" stroke-width="1.2" stroke-linecap="round"/>
<path d="M5.6 3.3h2M8.6 3.3h2M11.4 3.3h2" stroke="#8fe0ff" stroke-width="1"/>
<path d="M5.6 6h2M8.6 6h2M11.4 6h2M5.6 8.2h2M8.6 8.2h2M11.4 8.2h2M5.6 10.4h2M8.6 10.4h2M11.4 10.4h2M5.6 12.3h2M8.6 12.3h2M11.4 12.3h2" stroke="#fff" stroke-width="1.1"/></g></svg>
<div class="t" style="left:365px;top:30px;font-size:11px;font-weight:bold;color:#416da3;letter-spacing:0.43px;-webkit-text-stroke:0.3px #416da3">Part Parameters</div>
<div class="tab on" style="left:468px;width:111px"></div>
<svg class="a" style="left:479px;top:32px;" width="16" height="16" viewBox="0 0 16 16"><g transform="rotate(45 8 8)"><path d="M5.2 10.5 V4.2 A2.8 2.8 0 0 1 10.8 4.2 V12.2 A2.8 2.8 0 0 1 5.2 12.2 Z" fill="none" stroke="#7a7a7a" stroke-width="1.3"/><path d="M7.2 12 V5.5 A0.8 0.8 0 0 1 8.8 5.5 V11" fill="none" stroke="#8a8a8a" stroke-width="1.1"/></g></svg>
<div class="t" style="left:497px;top:30px;font-size:11px;font-weight:bold;color:#15498b;letter-spacing:0.39px;-webkit-text-stroke:0.3px #15498b">Attachments</div>
<div class="btn" style="left:11px;width:100px"></div>
<svg class="a" style="left:38px;top:423px;" width="14" height="14" viewBox="0 0 14 14"><rect x="0.5" y="0.5" width="13" height="13" rx="1.2" fill="#a55cc8" stroke="#7a3aa0"/>
<rect x="2.5" y="1" width="9" height="6" fill="#eef8f8"/><rect x="2.5" y="1" width="9" height="1" fill="#a8c0c0"/>
<rect x="3.5" y="9" width="6" height="4.5" fill="#cfcfd6"/><rect x="4.5" y="10" width="1.5" height="3" fill="#9b4fc0"/></svg>
<div class="t" style="left:57px;top:420px;font-size:11px;font-weight:normal;color:#333;">Save</div>
<div class="btn" style="left:117px;width:100px"></div>
<svg class="a" style="left:140px;top:423px;" width="14" height="14" viewBox="0 0 14 14"><path d="M4.2 0.5 H9.8 L13.5 4.2 V9.8 L9.8 13.5 H4.2 L0.5 9.8 V4.2 Z" fill="#ee2020" stroke="#e00000"/>
<path d="M4.3 4.3 L9.7 9.7 M9.7 4.3 L4.3 9.7" stroke="#fff" stroke-width="2.4"/></svg>
<div class="t" style="left:159px;top:420px;font-size:11px;font-weight:normal;color:#333;">Cancel</div>
<div class="btn" style="left:223px;width:100px"></div>
<svg class="a" style="left:235px;top:422px;" width="16" height="16" viewBox="0 0 16 16"><path d="M12.49 7.00 L15.70 6.76 L15.70 9.24 L12.49 9.00 L11.88 10.46 L14.32 12.57 L12.57 14.32 L10.46 11.88 L9.00 12.49 L9.24 15.70 L6.76 15.70 L7.00 12.49 L5.54 11.88 L3.43 14.32 L1.68 12.57 L4.12 10.46 L3.51 9.00 L0.30 9.24 L0.30 6.76 L3.51 7.00 L4.12 5.54 L1.68 3.43 L3.43 1.68 L5.54 4.12 L7.00 3.51 L6.76 0.30 L9.24 0.30 L9.00 3.51 L10.46 4.12 L12.57 1.68 L14.32 3.43 L11.88 5.54 Z" fill="#1d4796"/><circle cx="8" cy="8" r="5.3" fill="#1d4796"/><circle cx="8" cy="8" r="2.6" fill="#f4f4f4"/></svg>
<div class="t" style="left:255px;top:420px;font-size:11px;font-weight:normal;color:#333;">OctoPart…</div>
<div class="chk" style="left:329px;top:424px"></div>
<div class="t" style="left:346px;top:420px;font-size:12px;font-weight:normal;color:#000;">Create Copy after save</div>
<div class="a" style="left:5px;top:55px;width:624px;height:360px;background:#fff;border:1px solid #99bce8;border-top:none"></div>
<div class="tb"></div>
<svg class="a" style="left:13px;top:61px;" width="16" height="16" viewBox="0 0 16 16"><g transform="rotate(45 8 8)"><path d="M5.2 10.5 V4.2 A2.8 2.8 0 0 1 10.8 4.2 V12.2 A2.8 2.8 0 0 1 5.2 12.2 Z" fill="none" stroke="#7a7a7a" stroke-width="1.3"/><path d="M7.2 12 V5.5 A0.8 0.8 0 0 1 8.8 5.5 V11" fill="none" stroke="#8a8a8a" stroke-width="1.1"/></g></svg>
<div class="t" style="left:31px;top:58px;font-size:11px;font-weight:normal;color:#333;">Add</div>
<svg class="a" style="left:63px;top:61px;" width="16" height="16" viewBox="0 0 16 16"><circle cx="8" cy="7" r="6" fill="#e6e6e6" stroke="#8c8c8c"/><circle cx="8" cy="7" r="3" fill="#c8c8c8" stroke="#777"/><circle cx="8" cy="7" r="1.4" fill="#2850b0"/>
<path d="M4 13.5 h8 l-1.5 -1.8 h-5z" fill="#bbb" stroke="#888" stroke-width="0.6"/></svg>
<div class="t" style="left:83px;top:58px;font-size:11px;font-weight:normal;color:#333;letter-spacing:-0.3px">Take image</div>
<div class="dbx" style="left:145px;width:55px"></div>
<svg class="a" style="left:147px;top:61px;" width="16" height="16" viewBox="0 0 16 16"><g opacity="0.45"><circle cx="6.5" cy="6.5" r="5" fill="none" stroke="#d49a3a" stroke-width="1.6"/><path d="M10 10 L14.5 14.5" stroke="#d49a3a" stroke-width="2.6" stroke-linecap="round"/></g></svg>
<div class="t" style="left:168px;top:58px;font-size:11px;font-weight:normal;color:#9a9a9a;">View</div>
<div class="dbx" style="left:203px;width:60px"></div>
<svg class="a" style="left:206px;top:61px;" width="16" height="16" viewBox="0 0 16 16"><g opacity="0.42"><circle cx="8" cy="8" r="6.8" fill="#e02828" stroke="#b01010"/><rect x="4" y="6.8" width="8" height="2.6" fill="#fff"/></g></svg>
<div class="t" style="left:225px;top:58px;font-size:11px;font-weight:normal;color:#9a9a9a;">Delete</div>
<div class="hdr" style="left:6px;width:622px"></div>
<div class="sep" style="left:35px"></div>
<div class="sep" style="left:235px"></div>
<div class="sep" style="left:315px"></div>
<div class="sep" style="left:612px"></div>
<div class="t" style="left:41px;top:82px;font-size:11px;color:#000;letter-spacing:-0.2px">Filename</div>
<div class="t" style="left:241px;top:82px;font-size:11px;color:#000;letter-spacing:-0.2px">Size</div>
<div class="t" style="left:321px;top:82px;font-size:11px;color:#000;letter-spacing:-0.2px">Description</div>
<div class="a" style="left:6px;top:105px;width:607px;height:27px;background:#fff"></div>
<div class="a" style="left:6px;top:132px;width:607px;height:27px;background:#fafafa"></div>
<div class="a" style="left:6px;top:159px;width:607px;height:27px;background:#fff"></div>
<div class="a" style="left:6px;top:186px;width:607px;height:27px;background:#fafafa"></div>
<div class="a" style="left:6px;top:213px;width:607px;height:27px;background:#fff"></div>
<div class="a" style="left:6px;top:240px;width:607px;height:27px;background:#fafafa"></div>
<div class="a" style="left:6px;top:267px;width:607px;height:27px;background:#fff"></div>
<div class="a" style="left:6px;top:294px;width:607px;height:27px;background:#fafafa"></div>
<div class="a" style="left:6px;top:321px;width:607px;height:27px;background:#fff"></div>
<div class="a" style="left:6px;top:348px;width:607px;height:27px;background:#fafafa"></div>
<div class="a" style="left:6px;top:375px;width:607px;height:27px;background:#fff"></div>
<div class="a" style="left:6px;top:402px;width:607px;height:12px;background:#fafafa"></div>
<div class="a" style="left:0;top:0;width:633px;height:414px;overflow:hidden">
<div class="a" style="left:6px;top:132px;width:607px;height:1px;background:#ededed"></div>
<svg class="a" style="left:13px;top:112px;" width="15" height="11" viewBox="0 0 15 11"><rect x="0.5" y="0.5" width="14" height="10" fill="#3c5a8c" stroke="#ddd"/><rect x="1" y="1" width="13" height="4" fill="#6d89b8"/>
<circle cx="4" cy="3.5" r="1.6" fill="#f4f8a0"/><path d="M9 9 L11 5 L14 9z" fill="#2a3a50"/></svg>
<div class="t" style="left:41px;top:105px;font-size:11px;color:#000;letter-spacing:0px">8b7f34dd-a4f3-4b20-a0de-7c4db2fd<span style="letter-spacing:0.5px">…</span></div>
<div class="t" style="left:241px;top:105px;font-size:11px;color:#000;letter-spacing:-0.2px">112 KB</div>
<div class="a" style="left:6px;top:159px;width:607px;height:1px;background:#ededed"></div>
<svg class="a" style="left:14px;top:136px;" width="12" height="16" viewBox="0 0 12 16"><rect x="0.5" y="0.5" width="11" height="15" fill="url(#pdfg)" stroke="#b8202c"/>
<rect x="1.6" y="1.6" width="8.8" height="12.8" fill="none" stroke="#ee7a6a" stroke-width="0.5" opacity="0.7"/>
<rect x="7.6" y="2" width="2.4" height="12.6" fill="#ececec"/><rect x="9.2" y="2" width="0.8" height="12.6" fill="#c9c9c9"/>
<path d="M7.8 2.3 Q4.5 4.2 1.9 7.6" stroke="#fff" stroke-width="1.1" fill="none"/><path d="M1.9 9.3 Q4.6 11.6 6.4 14.6" stroke="#fff" stroke-width="1.1" fill="none"/></svg>
<div class="t" style="left:41px;top:132px;font-size:11px;color:#000;letter-spacing:0px">2N7000.pdf</div>
<div class="t" style="left:241px;top:132px;font-size:11px;color:#000;letter-spacing:-0.2px">110 KB</div>
<div class="a" style="left:6px;top:186px;width:607px;height:1px;background:#ededed"></div>
<svg class="a" style="left:14px;top:163px;" width="12" height="16" viewBox="0 0 12 16"><rect x="0.5" y="0.5" width="11" height="15" fill="url(#pdfg)" stroke="#b8202c"/>
<rect x="1.6" y="1.6" width="8.8" height="12.8" fill="none" stroke="#ee7a6a" stroke-width="0.5" opacity="0.7"/>
<rect x="7.6" y="2" width="2.4" height="12.6" fill="#ececec"/><rect x="9.2" y="2" width="0.8" height="12.6" fill="#c9c9c9"/>
<path d="M7.8 2.3 Q4.5 4.2 1.9 7.6" stroke="#fff" stroke-width="1.1" fill="none"/><path d="M1.9 9.3 Q4.6 11.6 6.4 14.6" stroke="#fff" stroke-width="1.1" fill="none"/></svg>
<div class="t" style="left:41px;top:159px;font-size:11px;color:#000;letter-spacing:0px">2N7000.-Fairchild-Semiconductor-da<span style="letter-spacing:0.5px">…</span></div>
<div class="t" style="left:241px;top:159px;font-size:11px;color:#000;letter-spacing:-0.2px">110 KB</div>
<div class="t" style="left:321px;top:159px;font-size:11px;color:#000;letter-spacing:-0.2px">Datasheet</div>
<div class="a" style="left:6px;top:213px;width:607px;height:1px;background:#ededed"></div>
<svg class="a" style="left:14px;top:190px;" width="12" height="16" viewBox="0 0 12 16"><rect x="0.5" y="0.5" width="11" height="15" fill="url(#pdfg)" stroke="#b8202c"/>
<rect x="1.6" y="1.6" width="8.8" height="12.8" fill="none" stroke="#ee7a6a" stroke-width="0.5" opacity="0.7"/>
<rect x="7.6" y="2" width="2.4" height="12.6" fill="#ececec"/><rect x="9.2" y="2" width="0.8" height="12.6" fill="#c9c9c9"/>
<path d="M7.8 2.3 Q4.5 4.2 1.9 7.6" stroke="#fff" stroke-width="1.1" fill="none"/><path d="M1.9 9.3 Q4.6 11.6 6.4 14.6" stroke="#fff" stroke-width="1.1" fill="none"/></svg>
<div class="t" style="left:41px;top:186px;font-size:11px;color:#000;letter-spacing:0px">2N7000.-Fairchild-Semiconductor-da<span style="letter-spacing:0.5px">…</span></div>
<div class="t" style="left:241px;top:186px;font-size:11px;color:#000;letter-spacing:-0.2px">95 KB</div>
<div class="t" style="left:321px;top:186px;font-size:11px;color:#000;letter-spacing:-0.2px">Datasheet</div>
<div class="a" style="left:6px;top:240px;width:607px;height:1px;background:#ededed"></div>
<svg class="a" style="left:14px;top:217px;" width="12" height="16" viewBox="0 0 12 16"><rect x="0.5" y="0.5" width="11" height="15" fill="url(#pdfg)" stroke="#b8202c"/>
<rect x="1.6" y="1.6" width="8.8" height="12.8" fill="none" stroke="#ee7a6a" stroke-width="0.5" opacity="0.7"/>
<rect x="7.6" y="2" width="2.4" height="12.6" fill="#ececec"/><rect x="9.2" y="2" width="0.8" height="12.6" fill="#c9c9c9"/>
<path d="M7.8 2.3 Q4.5 4.2 1.9 7.6" stroke="#fff" stroke-width="1.1" fill="none"/><path d="M1.9 9.3 Q4.6 11.6 6.4 14.6" stroke="#fff" stroke-width="1.1" fill="none"/></svg>
<div class="t" style="left:41px;top:213px;font-size:11px;color:#000;letter-spacing:0px">Fairchild-Semiconductor-2N7000..pdf</div>
<div class="t" style="left:241px;top:213px;font-size:11px;color:#000;letter-spacing:-0.2px">128 KB</div>
<div class="t" style="left:321px;top:213px;font-size:11px;color:#000;letter-spacing:-0.2px">Datasheet</div>
<div class="a" style="left:6px;top:267px;width:607px;height:1px;background:#ededed"></div>
<svg class="a" style="left:14px;top:244px;" width="12" height="16" viewBox="0 0 12 16"><rect x="0.5" y="0.5" width="11" height="15" fill="url(#pdfg)" stroke="#b8202c"/>
<rect x="1.6" y="1.6" width="8.8" height="12.8" fill="none" stroke="#ee7a6a" stroke-width="0.5" opacity="0.7"/>
<rect x="7.6" y="2" width="2.4" height="12.6" fill="#ececec"/><rect x="9.2" y="2" width="0.8" height="12.6" fill="#c9c9c9"/>
<path d="M7.8 2.3 Q4.5 4.2 1.9 7.6" stroke="#fff" stroke-width="1.1" fill="none"/><path d="M1.9 9.3 Q4.6 11.6 6.4 14.6" stroke="#fff" stroke-width="1.1" fill="none"/></svg>
<div class="t" style="left:41px;top:240px;font-size:11px;color:#000;letter-spacing:0px">2N7000.-Fairchild-Semiconductor-da<span style="letter-spacing:0.5px">…</span></div>
<div class="t" style="left:241px;top:240px;font-size:11px;color:#000;letter-spacing:-0.2px">88 KB</div>
<div class="t" style="left:321px;top:240px;font-size:11px;color:#000;letter-spacing:-0.2px">Datasheet</div>
<div class="a" style="left:6px;top:294px;width:607px;height:1px;background:#ededed"></div>
<svg class="a" style="left:14px;top:271px;" width="12" height="16" viewBox="0 0 12 16"><rect x="0.5" y="0.5" width="11" height="15" fill="url(#pdfg)" stroke="#b8202c"/>
<rect x="1.6" y="1.6" width="8.8" height="12.8" fill="none" stroke="#ee7a6a" stroke-width="0.5" opacity="0.7"/>
<rect x="7.6" y="2" width="2.4" height="12.6" fill="#ececec"/><rect x="9.2" y="2" width="0.8" height="12.6" fill="#c9c9c9"/>
<path d="M7.8 2.3 Q4.5 4.2 1.9 7.6" stroke="#fff" stroke-width="1.1" fill="none"/><path d="M1.9 9.3 Q4.6 11.6 6.4 14.6" stroke="#fff" stroke-width="1.1" fill="none"/></svg>
<div class="t" style="left:41px;top:267px;font-size:11px;color:#000;letter-spacing:0px">2N7000-Fairchild-Semiconductor-dat<span style="letter-spacing:0.5px">…</span></div>
<div class="t" style="left:241px;top:267px;font-size:11px;color:#000;letter-spacing:-0.2px">483 KB</div>
<div class="t" style="left:321px;top:267px;font-size:11px;color:#000;letter-spacing:-0.2px">Datasheet</div>
<div class="a" style="left:6px;top:321px;width:607px;height:1px;background:#ededed"></div>
<svg class="a" style="left:14px;top:298px;" width="12" height="16" viewBox="0 0 12 16"><rect x="0.5" y="0.5" width="11" height="15" fill="url(#pdfg)" stroke="#b8202c"/>
<rect x="1.6" y="1.6" width="8.8" height="12.8" fill="none" stroke="#ee7a6a" stroke-width="0.5" opacity="0.7"/>
<rect x="7.6" y="2" width="2.4" height="12.6" fill="#ececec"/><rect x="9.2" y="2" width="0.8" height="12.6" fill="#c9c9c9"/>
<path d="M7.8 2.3 Q4.5 4.2 1.9 7.6" stroke="#fff" stroke-width="1.1" fill="none"/><path d="M1.9 9.3 Q4.6 11.6 6.4 14.6" stroke="#fff" stroke-width="1.1" fill="none"/></svg>
<div class="t" style="left:41px;top:294px;font-size:11px;color:#000;letter-spacing:0px">2N7000-Fairchild-Semiconductor-dat<span style="letter-spacing:0.5px">…</span></div>
<div class="t" style="left:241px;top:294px;font-size:11px;color:#000;letter-spacing:-0.2px">409 KB</div>
<div class="t" style="left:321px;top:294px;font-size:11px;color:#000;letter-spacing:-0.2px">Datasheet</div>
<div class="a" style="left:6px;top:348px;width:607px;height:1px;background:#ededed"></div>
<svg class="a" style="left:14px;top:325px;" width="12" height="16" viewBox="0 0 12 16"><rect x="0.5" y="0.5" width="11" height="15" fill="url(#pdfg)" stroke="#b8202c"/>
<rect x="1.6" y="1.6" width="8.8" height="12.8" fill="none" stroke="#ee7a6a" stroke-width="0.5" opacity="0.7"/>
<rect x="7.6" y="2" width="2.4" height="12.6" fill="#ececec"/><rect x="9.2" y="2" width="0.8" height="12.6" fill="#c9c9c9"/>
<path d="M7.8 2.3 Q4.5 4.2 1.9 7.6" stroke="#fff" stroke-width="1.1" fill="none"/><path d="M1.9 9.3 Q4.6 11.6 6.4 14.6" stroke="#fff" stroke-width="1.1" fill="none"/></svg>
<div class="t" style="left:41px;top:321px;font-size:11px;color:#000;letter-spacing:0px">2N7000-Fairchild-Semiconductor-dat<span style="letter-spacing:0.5px">…</span></div>
<div class="t" style="left:241px;top:321px;font-size:11px;color:#000;letter-spacing:-0.2px">437 KB</div>
<div class="t" style="left:321px;top:321px;font-size:11px;color:#000;letter-spacing:-0.2px">Datasheet</div>
<div class="a" style="left:6px;top:375px;width:607px;height:1px;background:#ededed"></div>
<svg class="a" style="left:14px;top:352px;" width="12" height="16" viewBox="0 0 12 16"><rect x="0.5" y="0.5" width="11" height="15" fill="url(#pdfg)" stroke="#b8202c"/>
<rect x="1.6" y="1.6" width="8.8" height="12.8" fill="none" stroke="#ee7a6a" stroke-width="0.5" opacity="0.7"/>
<rect x="7.6" y="2" width="2.4" height="12.6" fill="#ececec"/><rect x="9.2" y="2" width="0.8" height="12.6" fill="#c9c9c9"/>
<path d="M7.8 2.3 Q4.5 4.2 1.9 7.6" stroke="#fff" stroke-width="1.1" fill="none"/><path d="M1.9 9.3 Q4.6 11.6 6.4 14.6" stroke="#fff" stroke-width="1.1" fill="none"/></svg>
<div class="t" style="left:41px;top:348px;font-size:11px;color:#000;letter-spacing:0px">Fairchild-Semiconductor-company-1<span style="letter-spacing:0.5px">…</span></div>
<div class="t" style="left:241px;top:348px;font-size:11px;color:#000;letter-spacing:-0.2px">123 KB</div>
<div class="t" style="left:321px;top:348px;font-size:11px;color:#000;letter-spacing:-0.2px">Compliance Document</div>
<div class="a" style="left:6px;top:402px;width:607px;height:1px;background:#ededed"></div>
<svg class="a" style="left:14px;top:379px;" width="12" height="16" viewBox="0 0 12 16"><rect x="0.5" y="0.5" width="11" height="15" fill="url(#pdfg)" stroke="#b8202c"/>
<rect x="1.6" y="1.6" width="8.8" height="12.8" fill="none" stroke="#ee7a6a" stroke-width="0.5" opacity="0.7"/>
<rect x="7.6" y="2" width="2.4" height="12.6" fill="#ececec"/><rect x="9.2" y="2" width="0.8" height="12.6" fill="#c9c9c9"/>
<path d="M7.8 2.3 Q4.5 4.2 1.9 7.6" stroke="#fff" stroke-width="1.1" fill="none"/><path d="M1.9 9.3 Q4.6 11.6 6.4 14.6" stroke="#fff" stroke-width="1.1" fill="none"/></svg>
<div class="t" style="left:41px;top:375px;font-size:11px;color:#000;letter-spacing:0px">Fairchild-Semiconductor-company-9.<span style="letter-spacing:0.5px">…</span></div>
<div class="t" style="left:241px;top:375px;font-size:11px;color:#000;letter-spacing:-0.2px">120 KB</div>
<div class="t" style="left:321px;top:375px;font-size:11px;color:#000;letter-spacing:-0.2px">Compliance Document</div>
<svg class="a" style="left:14px;top:406px;" width="12" height="16" viewBox="0 0 12 16"><rect x="0.5" y="0.5" width="11" height="15" fill="url(#pdfg)" stroke="#b8202c"/>
<rect x="1.6" y="1.6" width="8.8" height="12.8" fill="none" stroke="#ee7a6a" stroke-width="0.5" opacity="0.7"/>
<rect x="7.6" y="2" width="2.4" height="12.6" fill="#ececec"/><rect x="9.2" y="2" width="0.8" height="12.6" fill="#c9c9c9"/>
<path d="M7.8 2.3 Q4.5 4.2 1.9 7.6" stroke="#fff" stroke-width="1.1" fill="none"/><path d="M1.9 9.3 Q4.6 11.6 6.4 14.6" stroke="#fff" stroke-width="1.1" fill="none"/></svg>
<div class="t" style="left:41px;top:402px;font-size:11px;color:#000;letter-spacing:0px">Fairchild-Semiconductor-company-1<span style="letter-spacing:0.5px">…</span></div>
<div class="t" style="left:241px;top:402px;font-size:11px;color:#000;letter-spacing:-0.2px">401 KB</div>
<div class="t" style="left:321px;top:402px;font-size:11px;color:#000;letter-spacing:-0.2px">Compliance Document</div>
</div>
<div class="a" style="left:613px;top:105px;width:15px;height:309px;background:#f1f1f1"></div>
<svg class="a" style="left:616px;top:110px;" width="9" height="5" viewBox="0 0 9 5"><path d="M0.5 4.5 L4.5 0.5 L8.5 4.5z" fill="#a3a3a3"/></svg>
<svg class="a" style="left:616px;top:404px;" width="9" height="5" viewBox="0 0 9 5"><path d="M0.5 0.5 L4.5 4.5 L8.5 0.5z" fill="#505050"/></svg>
<div class="a" style="left:615px;top:120px;width:11px;height:106px;background:#c1c1c1"></div>
</div>
<svg class="a" style="left:629px;top:445px;" width="9" height="9" viewBox="0 0 9 9"><polygon points="1.3,4.5 4.5,1.3 7.7,4.5" fill="#aebdd1"/><polygon points="1.3,4.5 4.5,7.7 7.7,4.5" fill="#f6f8fb"/></svg>
<svg class="a" style="left:629px;top:0px;" width="9" height="4" viewBox="0 0 9 4"><polygon points="1.5,0 7.5,0 4.5,3" fill="#fbfcfd"/></svg>
<svg class="a" style="left:0px;top:445px;" width="4" height="9" viewBox="0 0 4 9"><polygon points="0,1.5 0,7.5 3,4.5" fill="#fbfcfd"/></svg>
<svg class="a" style="left:0px;top:0px;" width="4" height="4" viewBox="0 0 4 4"><polygon points="0,0 3.2,0 0,3.2" fill="#fbfcfd"/></svg>
<svg class="a" style="left:1262px;top:0px;" width="4" height="4" viewBox="0 0 4 4"><polygon points="0.8,0 4,0 4,3.2" fill="#fbfcfd"/></svg>
<svg class="a" style="left:0px;top:894px;" width="4" height="4" viewBox="0 0 4 4"><polygon points="0,0.8 3.2,4 0,4" fill="#a9b8cc"/></svg>
<svg class="a" style="left:1262px;top:894px;" width="4" height="4" viewBox="0 0 4 4"><polygon points="4,0.8 0.8,4 4,4" fill="#a9b8cc"/></svg>
</body></html>
